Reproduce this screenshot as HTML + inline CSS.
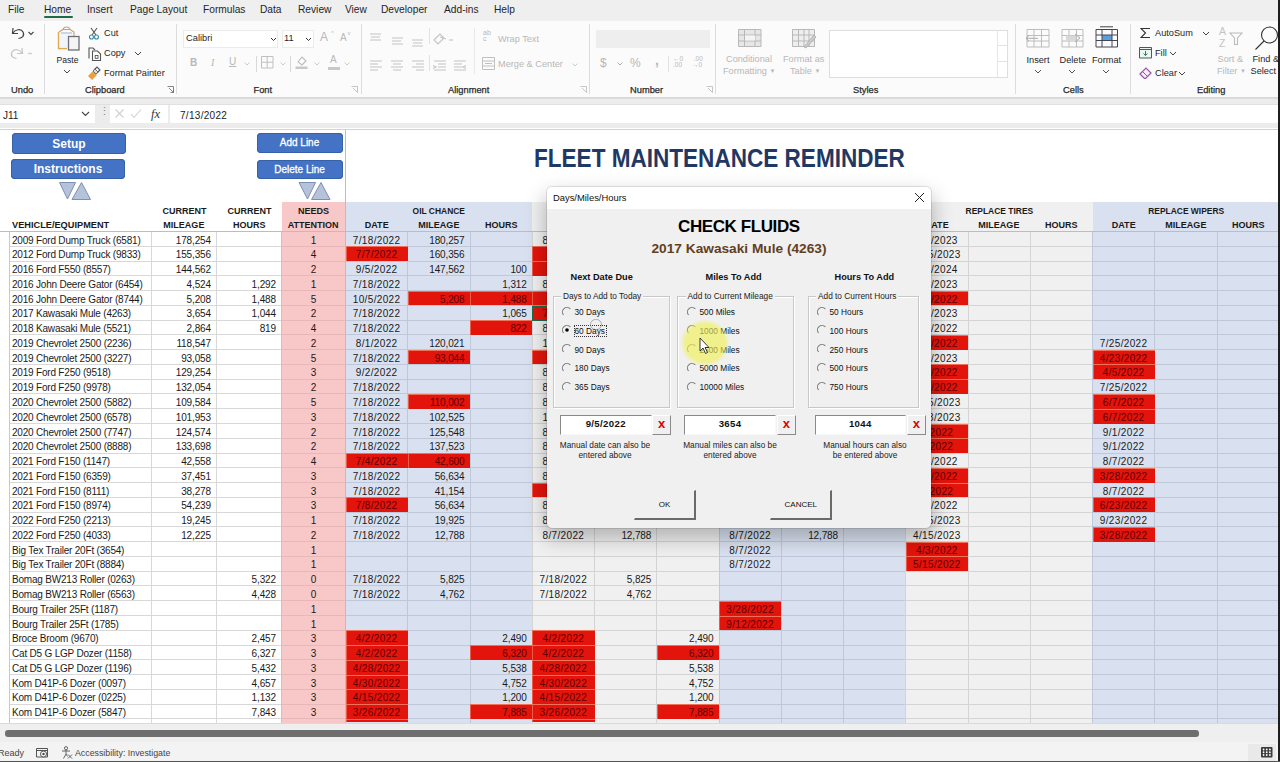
<!DOCTYPE html>
<html><head><meta charset="utf-8">
<style>
*{box-sizing:border-box}
html,body{margin:0;padding:0;width:1280px;height:762px;overflow:hidden;background:#fff;font-family:"Liberation Sans",sans-serif;color:#222}
#root{position:relative;width:1280px;height:762px;overflow:hidden}
#root div, #root span.a{position:absolute}
.tab{top:3.8px;font-size:10.2px;color:#262626;white-space:nowrap}
.rb{font-size:9.5px;color:#262626;white-space:nowrap}
.dis{color:#b8b8b8}
.glbl{top:84.5px;font-size:9.3px;color:#2a2a2a;white-space:nowrap;-webkit-text-stroke:0.25px #2a2a2a}
.sep{width:1px;background:#dcdcdc}
.c{font-size:10px;line-height:14.77px;height:14.77px;color:#1a1a1a;white-space:nowrap;padding:0 5.5px 0 2.5px}
.nm{letter-spacing:-0.2px}.dt{letter-spacing:0.35px}.nb{letter-spacing:-0.12px}
.rt{color:#5e0000}
.red{background:#e3140b;box-shadow:inset 0 1px 0 #f0705a, inset 1px 0 0 #ec5a48}
.h{font-size:9.6px;font-weight:bold;line-height:14px;color:#1a1a1a;text-align:center;white-space:nowrap}
.btn{background:#4472c4;border-radius:4px;box-shadow:inset 0 0 0 1px #3560aa;color:#fff;font-weight:bold;text-align:center;white-space:nowrap}
.dlg{font-size:9px;color:#222;white-space:nowrap}
</style></head><body><div id="root">

<!-- tab row -->
<div style="left:0;top:0;width:1280px;height:21px;background:#efefef"></div>
<div class="tab" style="left:8px">File</div>
<div class="tab" style="left:44px;color:#1e1e1e">Home</div>
<div style="left:44px;top:16px;width:29px;height:2px;background:#1e6b48;border-radius:1px"></div>
<div class="tab" style="left:87px">Insert</div>
<div class="tab" style="left:130px">Page Layout</div>
<div class="tab" style="left:203px">Formulas</div>
<div class="tab" style="left:260px">Data</div>
<div class="tab" style="left:298px">Review</div>
<div class="tab" style="left:345px">View</div>
<div class="tab" style="left:381px">Developer</div>
<div class="tab" style="left:444px">Add-ins</div>
<div class="tab" style="left:494px">Help</div>

<!-- ribbon body -->
<div style="left:0;top:21px;width:1280px;height:77px;background:#fbfbfb"></div>
<div style="left:0;top:97px;width:1280px;height:1px;background:#d8d8d8"></div>
<div style="left:0;top:98px;width:1280px;height:30px;background:#ececec"></div>
<!-- separators -->
<div class="sep" style="left:44px;top:24px;height:70px"></div>
<div class="sep" style="left:176px;top:24px;height:70px"></div>
<div class="sep" style="left:360.5px;top:24px;height:70px"></div>
<div class="sep" style="left:589px;top:24px;height:70px"></div>
<div class="sep" style="left:715px;top:24px;height:70px"></div>
<div class="sep" style="left:1015px;top:24px;height:70px"></div>
<div class="sep" style="left:1129.5px;top:24px;height:70px"></div>

<!-- group labels -->
<div class="glbl" style="left:11px">Undo</div>
<div class="glbl" style="left:85px">Clipboard</div>
<div class="glbl" style="left:253.5px">Font</div>
<div class="glbl" style="left:448px">Alignment</div>
<div class="glbl" style="left:630px">Number</div>
<div class="glbl" style="left:853px">Styles</div>
<div class="glbl" style="left:1063px">Cells</div>
<div class="glbl" style="left:1197px">Editing</div>
<svg style="position:absolute;left:167px;top:86px" width="8" height="8"><path d="M0.5 0.5h6v6M2 2l4.5 4.5M6.5 3.5v3h-3" fill="none" stroke="#777" stroke-width="0.9"/></svg>
<svg style="position:absolute;left:351px;top:86px" width="8" height="8"><path d="M0.5 0.5h6v6M2 2l4.5 4.5" fill="none" stroke="#c0c0c0" stroke-width="0.9"/></svg>
<svg style="position:absolute;left:580px;top:86px" width="8" height="8"><path d="M0.5 0.5h6v6M2 2l4.5 4.5" fill="none" stroke="#c0c0c0" stroke-width="0.9"/></svg>
<svg style="position:absolute;left:706px;top:86px" width="8" height="8"><path d="M0.5 0.5h6v6M2 2l4.5 4.5" fill="none" stroke="#c0c0c0" stroke-width="0.9"/></svg>

<!-- Undo group -->
<svg style="position:absolute;left:9px;top:25px" width="28" height="36">
 <path d="M4 3 L3.5 8.5 L9 8.5" fill="none" stroke="#444" stroke-width="1.2"/>
 <path d="M3.8 8.3 C6 4.5 12 3 14 7 C16 11 13 13 9.5 13.5" fill="none" stroke="#444" stroke-width="1.2"/>
 <path d="M19.5 7 l2.5 2.5 l2.5 -2.5" fill="none" stroke="#444" stroke-width="1.1"/>
 <path d="M13 23 L13.5 28.5 L8 28.5" fill="none" stroke="#c4c4c4" stroke-width="1.2"/>
 <path d="M13.2 28.3 C11 24.5 5 23 3 27 C1 31 4 33 7.5 33.5" fill="none" stroke="#c4c4c4" stroke-width="1.2"/>
 <path d="M19 28.5 h4" stroke="#d0d0d0" stroke-width="1.5"/>
</svg>

<!-- Clipboard group -->
<svg style="position:absolute;left:56px;top:26px" width="26" height="26">
 <path d="M3 6 L7 3.5 M14 3.5 L18 6 v4" fill="none" stroke="#c8a46a" stroke-width="1.2"/>
 <path d="M2.5 6 V22.5 H11" fill="none" stroke="#e0a850" stroke-width="1.4"/>
 <path d="M7 3.5 C7.5 1.5 8.5 1 10.5 1 C12.5 1 13.5 1.5 14 3.5 Z" fill="none" stroke="#c8a46a" stroke-width="1.1"/>
 <rect x="4" y="6.5" width="13" height="15" fill="#f1f5fa"/><path d="M5 7h11" stroke="#a8c4dc" stroke-width="1.2"/>
 <rect x="12.5" y="10.5" width="10.5" height="13.5" fill="#f4f4f4" stroke="#6e6e78" stroke-width="1.3"/>
</svg>
<div class="rb" style="left:56.5px;top:54.5px;font-size:8.6px">Paste</div>
<svg style="position:absolute;left:63px;top:69px" width="8" height="5"><path d="M1 1l3 3l3-3" fill="none" stroke="#444" stroke-width="1"/></svg>
<svg style="position:absolute;left:88px;top:27px" width="12" height="13"><path d="M3 1 L8 8 M9 1 L4 8" stroke="#555" stroke-width="1.1"/><circle cx="3.5" cy="10" r="2" fill="none" stroke="#3a8fa8" stroke-width="1.1"/><circle cx="8.5" cy="10" r="2" fill="none" stroke="#3a8fa8" stroke-width="1.1"/></svg>
<div class="rb" style="left:104px;top:28px;font-size:9.2px">Cut</div>
<svg style="position:absolute;left:87.5px;top:46.5px" width="15" height="14"><path d="M1 11.5 V1 h4 l2 2" fill="none" stroke="#555" stroke-width="1.1"/><path d="M4.5 4 h5 l3 3 v6.5 h-8 Z" fill="#fff" stroke="#555" stroke-width="1.1"/><rect x="7.2" y="8.5" width="2.8" height="2.8" fill="none" stroke="#555" stroke-width="0.9"/></svg>
<div class="rb" style="left:104px;top:48px;font-size:9.2px">Copy</div>
<svg style="position:absolute;left:134px;top:51px" width="8" height="5"><path d="M1 1l3 3l3-3" fill="none" stroke="#444" stroke-width="1"/></svg>
<svg style="position:absolute;left:87px;top:66px" width="14" height="14"><path d="M1 10 L6 5 L10 9 L5 14 Z" fill="#e8a040"/><path d="M7 4 L10 1 L13 4 L10 7" fill="none" stroke="#555" stroke-width="1.1"/><path d="M6 5 L8 3 L11 6 L9 8 Z" fill="#ddd" stroke="#555" stroke-width="0.8"/></svg>
<div class="rb" style="left:104px;top:68px;font-size:9.2px">Format Painter</div>

<!-- Font group -->
<div style="left:183px;top:30px;width:95px;height:18px;background:#fff;border:1px solid #ebebeb"></div>
<div class="rb" style="left:186px;top:33px;font-size:9.3px">Calibri</div>
<svg style="position:absolute;left:270px;top:37px" width="7" height="5"><path d="M1 1l2.5 2.5l2.5-2.5" fill="none" stroke="#333" stroke-width="1"/></svg>
<div style="left:281.5px;top:30px;width:32px;height:18px;background:#fff;border:1px solid #ebebeb"></div>
<div class="rb" style="left:284px;top:33px;font-size:9.3px">11</div>
<svg style="position:absolute;left:305px;top:37px" width="7" height="5"><path d="M1 1l2.5 2.5l2.5-2.5" fill="none" stroke="#333" stroke-width="1"/></svg>
<div class="rb dis" style="left:320px;top:30px;font-size:12px">A</div>
<div class="rb dis" style="left:331px;top:30px;font-size:6px">^</div>
<div class="rb dis" style="left:340px;top:32px;font-size:10px">A</div>
<div class="rb dis" style="left:347.5px;top:30px;font-size:6px">v</div>
<div class="rb dis" style="left:190px;top:57px;font-size:10px;font-weight:bold">B</div>
<div class="rb dis" style="left:211px;top:57px;font-size:10px;font-style:italic;font-family:'Liberation Serif'">I</div>
<div class="rb dis" style="left:229px;top:56px;font-size:10px;text-decoration:underline">U</div>
<svg style="position:absolute;left:244px;top:62px" width="6" height="4"><path d="M0.5 0.5l2.5 2.5l2.5-2.5" fill="none" stroke="#ccc" stroke-width="1"/></svg>
<div class="sep" style="left:256px;top:56px;height:16px;background:#d8d8d8"></div>
<svg style="position:absolute;left:261px;top:56px" width="13" height="13"><path d="M0.5 0.5h11.5v11.5h-11.5z M6.2 0.5v11.5 M0.5 6.2h11.5" fill="none" stroke="#c0c0c0" stroke-width="1"/></svg>
<svg style="position:absolute;left:280px;top:62px" width="6" height="4"><path d="M0.5 0.5l2.5 2.5l2.5-2.5" fill="none" stroke="#ccc" stroke-width="1"/></svg>
<div class="sep" style="left:290px;top:56px;height:16px;background:#d8d8d8"></div>
<svg style="position:absolute;left:295px;top:55px" width="14" height="15"><path d="M3 7 L7 2 L11 6 L7 10 Z" fill="none" stroke="#bbb" stroke-width="1.1"/><rect x="0.5" y="11.5" width="12" height="2.5" fill="#c8c8c8"/></svg>
<svg style="position:absolute;left:314px;top:62px" width="6" height="4"><path d="M0.5 0.5l2.5 2.5l2.5-2.5" fill="none" stroke="#ccc" stroke-width="1"/></svg>
<div class="rb dis" style="left:330px;top:54px;font-size:10px">A</div>
<div style="left:327.5px;top:67px;width:12px;height:2.5px;background:#c8c8c8"></div>
<svg style="position:absolute;left:344px;top:62px" width="6" height="4"><path d="M0.5 0.5l2.5 2.5l2.5-2.5" fill="none" stroke="#ccc" stroke-width="1"/></svg>

<!-- Alignment group -->
<svg style="position:absolute;left:368px;top:31px" width="60" height="40" stroke="#c4c4c4" stroke-width="1.1" fill="none">
 <path d="M2 3h11 M3 6h9 M2 9h11"/>
 <path d="M24 7h11 M24 10h9 M24 13h11"/>
 <path d="M44 9h11 M45 12h9 M44 15h11"/>
 <path d="M2 30h12 M2 33h8 M2 36h12 M2 39h8"/>
 <path d="M23 30h12 M25 33h8 M23 36h12 M25 39h8"/>
 <path d="M44 30h12 M48 33h8 M44 36h12 M48 39h8"/>
</svg>
<div class="sep" style="left:428.5px;top:28px;height:16px;background:#e2e2e2"></div>
<div class="sep" style="left:428.5px;top:55px;height:16px;background:#e2e2e2"></div>
<svg style="position:absolute;left:432px;top:31px" width="40" height="40" stroke="#c4c4c4" stroke-width="1.1" fill="none">
 <path d="M2 9 L8 3 L12 7 L6 13 Z M8 6 l6 2" />
 <path d="M17 9h4"/>
 <path d="M2 30h12 M6 33h8 M6 36h8 M2 39h12 M1 34.5l3 1.5l-3 1.5"/>
 <path d="M22 30h12 M22 33h8 M22 36h8 M22 39h12 M34 34.5l-3 1.5l3 1.5"/>
</svg>
<div class="sep" style="left:473.5px;top:28px;height:46px;background:#e8e8e8"></div>
<div class="rb dis" style="left:483px;top:30px;font-size:7px;line-height:6px">ab<br>c</div>
<div class="rb dis" style="left:498px;top:34px;font-size:9.2px">Wrap Text</div>
<svg style="position:absolute;left:482px;top:57px" width="13" height="13"><path d="M0.5 0.5h12v12h-12z M0.5 4h12 M0.5 9h12 M3 6.5h7" fill="none" stroke="#c0c0c0" stroke-width="1"/></svg>
<div class="rb dis" style="left:498px;top:59px;font-size:9.2px">Merge &amp; Center</div>
<svg style="position:absolute;left:572px;top:63px" width="6" height="4"><path d="M0.5 0.5l2.5 2.5l2.5-2.5" fill="none" stroke="#ccc" stroke-width="1"/></svg>

<!-- Number group -->
<div style="left:595.5px;top:29.5px;width:114px;height:18px;background:#eeeeee"></div>
<div class="rb dis" style="left:600px;top:56px;font-size:12px">$</div>
<svg style="position:absolute;left:617px;top:62px" width="6" height="4"><path d="M0.5 0.5l2.5 2.5l2.5-2.5" fill="none" stroke="#aaa" stroke-width="1"/></svg>
<div class="rb dis" style="left:630px;top:56px;font-size:12px">%</div>
<div class="rb dis" style="left:655px;top:52px;font-size:14px;font-weight:bold">,</div>
<div class="sep" style="left:668px;top:56px;height:16px;background:#e2e2e2"></div>
<div class="rb dis" style="left:673px;top:56px;font-size:6.5px;line-height:6px">&#8592;0<br>.00</div>
<div class="rb dis" style="left:692px;top:56px;font-size:6.5px;line-height:6px">&nbsp;.00<br>&#8594;0</div>

<!-- Styles group -->
<svg style="position:absolute;left:738px;top:28.5px" width="24" height="18"><path d="M0.5 0.5h22.5v17h-22.5z M0.5 6h22.5 M0.5 12h22.5 M6.5 0.5v17 M17 0.5v17" fill="#e6e6e6" stroke="#b8b8b8" stroke-width="1"/><rect x="7" y="6.5" width="10" height="5" fill="#f4f4f4"/></svg>
<div class="rb dis" style="left:726px;top:54px;font-size:9.2px">Conditional</div>
<div class="rb dis" style="left:723px;top:65.5px;font-size:9.2px">Formatting <span style="font-size:6px;vertical-align:1px">▼</span></div>
<svg style="position:absolute;left:792px;top:28.5px" width="25" height="20"><path d="M0.5 0.5h22v17h-22z M0.5 6h22 M0.5 12h22 M6.5 0.5v17 M12 0.5v17 M17 0.5v17" fill="#eee" stroke="#b8b8b8" stroke-width="1"/><path d="M12 18 L22 6 L24 8 L14 19 Z" fill="#ccc" stroke="#aaa" stroke-width="0.8"/></svg>
<div class="rb dis" style="left:783px;top:54px;font-size:9.2px">Format as</div>
<div class="rb dis" style="left:790px;top:65.5px;font-size:9.2px">Table <span style="font-size:6px;vertical-align:1px">▼</span></div>
<div style="left:828.5px;top:29.5px;width:179px;height:48px;background:#fff;border:1px solid #dedede"></div>
<div style="left:997px;top:29.5px;width:1px;height:48px;background:#e6e6e6"></div>
<div style="left:997px;top:45px;width:10px;height:1px;background:#e2e2e2"></div>
<div style="left:997px;top:61px;width:10px;height:1px;background:#e2e2e2"></div>

<!-- Cells group -->
<svg style="position:absolute;left:1026px;top:29px" width="24" height="19" fill="none" stroke="#bdbdbd" stroke-width="1"><path d="M1 0.5h22v17.5h-22z M1 6.5h22 M1 12h22 M8 0.5v17.5 M15.5 0.5v17.5"/><path d="M0 9.3h12 M3 6.5l-3 2.8l3 2.8" stroke="#aaa"/></svg>
<div class="rb" style="left:1026.5px;top:55px;font-size:9.2px">Insert</div>
<svg style="position:absolute;left:1034px;top:69px" width="8" height="5"><path d="M1 1l3 3l3-3" fill="none" stroke="#555" stroke-width="1"/></svg>
<svg style="position:absolute;left:1061px;top:29px" width="24" height="19" fill="none" stroke="#bdbdbd" stroke-width="1"><path d="M1 0.5h21v17.5h-21z M1 6.5h21 M1 12h21 M8 0.5v17.5 M15.5 0.5v17.5"/><rect x="5" y="6.5" width="10" height="5.5" fill="#d8d8d8" stroke="none"/><path d="M14 5 l5 4 l-5 4" stroke="#aaa"/></svg>
<div class="rb" style="left:1059.5px;top:55px;font-size:9.2px">Delete</div>
<svg style="position:absolute;left:1068px;top:69px" width="8" height="5"><path d="M1 1l3 3l3-3" fill="none" stroke="#555" stroke-width="1"/></svg>
<svg style="position:absolute;left:1095px;top:26px" width="24" height="22" fill="none"><path d="M5 0.8h13" stroke="#444" stroke-width="1"/><rect x="7" y="9" width="10" height="5.5" fill="#5aa0e0"/><path d="M1 3.5h21.5v17.5h-21.5z M1 9h21.5 M1 14.5h21.5 M7 3.5v17.5 M17 3.5v17.5" stroke="#445" stroke-width="1"/></svg>
<div class="rb" style="left:1092px;top:55px;font-size:9.2px">Format</div>
<svg style="position:absolute;left:1102px;top:69px" width="8" height="5"><path d="M1 1l3 3l3-3" fill="none" stroke="#555" stroke-width="1"/></svg>

<!-- Editing group -->
<svg style="position:absolute;left:1140px;top:26.5px" width="11" height="12"><path d="M10 1.5 H1 L5.5 6 L1 10.5 H10" fill="none" stroke="#333" stroke-width="1.1"/></svg>
<div class="rb" style="left:1155px;top:28px;font-size:9.2px">AutoSum</div>
<svg style="position:absolute;left:1202px;top:31px" width="8" height="5"><path d="M1 1l3 3l3-3" fill="none" stroke="#444" stroke-width="1"/></svg>
<svg style="position:absolute;left:1139px;top:47px" width="13" height="12"><path d="M0.5 0.5h12v10.5h-12z" fill="#eef6f4" stroke="#4a5a5a" stroke-width="1"/><path d="M0.5 2.5h12" stroke="#4a5a5a" stroke-width="1"/><path d="M6.5 4v4.5 M4.5 6.5l2 2l2-2" fill="none" stroke="#2e7d5e" stroke-width="1"/></svg>
<div class="rb" style="left:1155px;top:48px;font-size:9.2px">Fill</div>
<svg style="position:absolute;left:1169px;top:51px" width="8" height="5"><path d="M1 1l3 3l3-3" fill="none" stroke="#444" stroke-width="1"/></svg>
<svg style="position:absolute;left:1139px;top:67px" width="13" height="12"><path d="M1 7 L7 1 L12 6 L6 12 Z" fill="#f4eef8" stroke="#a050b0" stroke-width="1.2"/><path d="M3.5 4.5 L8.5 9.5" stroke="#a050b0" stroke-width="1"/></svg>
<div class="rb" style="left:1155px;top:68px;font-size:9.2px">Clear</div>
<svg style="position:absolute;left:1178px;top:71px" width="8" height="5"><path d="M1 1l3 3l3-3" fill="none" stroke="#444" stroke-width="1"/></svg>
<div class="rb dis" style="left:1219px;top:24.5px;font-size:10.5px;line-height:12px;color:#c4c4c4">A<br>Z</div>
<svg style="position:absolute;left:1229px;top:32px" width="14" height="14"><path d="M1 1h12l-4.5 5v6.5h-3v-6.5z" fill="none" stroke="#bbb" stroke-width="1.1"/></svg>
<div class="rb dis" style="left:1217.5px;top:54px;font-size:9.2px">Sort &amp;</div>
<div class="rb dis" style="left:1217px;top:65.5px;font-size:9.2px">Filter <span style="font-size:6px;vertical-align:1px">▼</span></div>
<svg style="position:absolute;left:1254px;top:25px" width="26" height="26"><circle cx="15.5" cy="10" r="8" fill="none" stroke="#333" stroke-width="1.1"/><path d="M10 16 L1.5 24.5" stroke="#333" stroke-width="1.1"/></svg>
<div class="rb" style="left:1252.5px;top:54px;font-size:9.2px">Find &amp;</div>
<div class="rb" style="left:1250.5px;top:65.5px;font-size:9.2px">Select <span style="font-size:6px;vertical-align:1px">▼</span></div>


<!-- formula bar -->
<div style="left:0;top:104px;width:95px;height:19px;background:#fff"></div>
<div class="rb" style="left:3px;top:109.5px;font-size:10px;color:#222">J11</div>
<div class="rb" style="left:99px;top:105px;font-size:11px;color:#888">&#8942;</div>
<svg style="position:absolute;left:81px;top:111px" width="9" height="6"><path d="M1 1l3.5 3.5l3.5-3.5" fill="none" stroke="#444" stroke-width="1.1"/></svg>
<div style="left:110px;top:104px;width:58px;height:19px;background:#fff"></div>
<div style="left:170px;top:104px;width:1110px;height:19px;background:#fff"></div>
<div class="rb" style="left:180px;top:109.5px;font-size:10px;color:#222;letter-spacing:0.3px">7/13/2022</div>
<svg style="position:absolute;left:114px;top:108px" width="36" height="12"><path d="M1.5 1.5l8 8 M9.5 1.5l-8 8" stroke="#d0d0d0" stroke-width="1.1"/><path d="M17 6l3 3.5l7-8" fill="none" stroke="#d0d0d0" stroke-width="1.1"/></svg>
<div class="rb" style="left:151px;top:106.5px;font-size:12.5px;font-style:italic;font-family:'Liberation Serif';color:#333">fx</div>

<!-- sheet -->
<div style="left:0;top:129.5px;width:1280px;height:595px;background:#fff"></div>
<div style="left:0;top:129px;width:1280px;height:1.2px;background:#d2d2d2"></div>
<div style="left:0;top:97.5px;width:1280px;height:1px;background:#dcdcdc"></div>
<div style="left:0;top:103.8px;width:1280px;height:0.8px;background:#e0e0e0"></div>
<div style="left:281.5px;top:202px;width:64.0px;height:520.5px;background:#f8c8c8"></div>
<div style="left:345.5px;top:202px;width:62.25px;height:520.5px;background:#d9e1f0"></div>
<div style="left:407.75px;top:202px;width:62.25px;height:520.5px;background:#d9e1f0"></div>
<div style="left:470.0px;top:202px;width:62.25px;height:520.5px;background:#d9e1f0"></div>
<div style="left:532.25px;top:202px;width:62.25px;height:520.5px;background:#f0f0f0"></div>
<div style="left:594.5px;top:202px;width:62.25px;height:520.5px;background:#f0f0f0"></div>
<div style="left:656.75px;top:202px;width:62.25px;height:520.5px;background:#f0f0f0"></div>
<div style="left:719.0px;top:202px;width:62.25px;height:520.5px;background:#d9e1f0"></div>
<div style="left:781.25px;top:202px;width:62.25px;height:520.5px;background:#d9e1f0"></div>
<div style="left:843.5px;top:202px;width:62.25px;height:520.5px;background:#d9e1f0"></div>
<div style="left:905.75px;top:202px;width:62.25px;height:520.5px;background:#f0f0f0"></div>
<div style="left:968.0px;top:202px;width:62.25px;height:520.5px;background:#f0f0f0"></div>
<div style="left:1030.25px;top:202px;width:62.25px;height:520.5px;background:#f0f0f0"></div>
<div style="left:1092.5px;top:202px;width:62.25px;height:520.5px;background:#d9e1f0"></div>
<div style="left:1154.75px;top:202px;width:62.25px;height:520.5px;background:#d9e1f0"></div>
<div style="left:1217.0px;top:202px;width:62.25px;height:520.5px;background:#d9e1f0"></div>
<div style="left:9.5px;top:245.77px;width:142.0px;height:1px;background:#d8d8d8"></div>
<div style="left:151.5px;top:245.77px;width:65.0px;height:1px;background:#d8d8d8"></div>
<div style="left:216.5px;top:245.77px;width:65.0px;height:1px;background:#d8d8d8"></div>
<div style="left:281.5px;top:245.77px;width:64.0px;height:1px;background:#e8b8b8"></div>
<div style="left:345.5px;top:245.77px;width:62.25px;height:1px;background:#bfc8d8"></div>
<div style="left:407.75px;top:245.77px;width:62.25px;height:1px;background:#bfc8d8"></div>
<div style="left:470.0px;top:245.77px;width:62.25px;height:1px;background:#bfc8d8"></div>
<div style="left:532.25px;top:245.77px;width:62.25px;height:1px;background:#d4d4d4"></div>
<div style="left:594.5px;top:245.77px;width:62.25px;height:1px;background:#d4d4d4"></div>
<div style="left:656.75px;top:245.77px;width:62.25px;height:1px;background:#d4d4d4"></div>
<div style="left:719.0px;top:245.77px;width:62.25px;height:1px;background:#bfc8d8"></div>
<div style="left:781.25px;top:245.77px;width:62.25px;height:1px;background:#bfc8d8"></div>
<div style="left:843.5px;top:245.77px;width:62.25px;height:1px;background:#bfc8d8"></div>
<div style="left:905.75px;top:245.77px;width:62.25px;height:1px;background:#d4d4d4"></div>
<div style="left:968.0px;top:245.77px;width:62.25px;height:1px;background:#d4d4d4"></div>
<div style="left:1030.25px;top:245.77px;width:62.25px;height:1px;background:#d4d4d4"></div>
<div style="left:1092.5px;top:245.77px;width:62.25px;height:1px;background:#bfc8d8"></div>
<div style="left:1154.75px;top:245.77px;width:62.25px;height:1px;background:#bfc8d8"></div>
<div style="left:1217.0px;top:245.77px;width:62.25px;height:1px;background:#bfc8d8"></div>
<div style="left:9.5px;top:260.54px;width:142.0px;height:1px;background:#d8d8d8"></div>
<div style="left:151.5px;top:260.54px;width:65.0px;height:1px;background:#d8d8d8"></div>
<div style="left:216.5px;top:260.54px;width:65.0px;height:1px;background:#d8d8d8"></div>
<div style="left:281.5px;top:260.54px;width:64.0px;height:1px;background:#e8b8b8"></div>
<div style="left:345.5px;top:260.54px;width:62.25px;height:1px;background:#bfc8d8"></div>
<div style="left:407.75px;top:260.54px;width:62.25px;height:1px;background:#bfc8d8"></div>
<div style="left:470.0px;top:260.54px;width:62.25px;height:1px;background:#bfc8d8"></div>
<div style="left:532.25px;top:260.54px;width:62.25px;height:1px;background:#d4d4d4"></div>
<div style="left:594.5px;top:260.54px;width:62.25px;height:1px;background:#d4d4d4"></div>
<div style="left:656.75px;top:260.54px;width:62.25px;height:1px;background:#d4d4d4"></div>
<div style="left:719.0px;top:260.54px;width:62.25px;height:1px;background:#bfc8d8"></div>
<div style="left:781.25px;top:260.54px;width:62.25px;height:1px;background:#bfc8d8"></div>
<div style="left:843.5px;top:260.54px;width:62.25px;height:1px;background:#bfc8d8"></div>
<div style="left:905.75px;top:260.54px;width:62.25px;height:1px;background:#d4d4d4"></div>
<div style="left:968.0px;top:260.54px;width:62.25px;height:1px;background:#d4d4d4"></div>
<div style="left:1030.25px;top:260.54px;width:62.25px;height:1px;background:#d4d4d4"></div>
<div style="left:1092.5px;top:260.54px;width:62.25px;height:1px;background:#bfc8d8"></div>
<div style="left:1154.75px;top:260.54px;width:62.25px;height:1px;background:#bfc8d8"></div>
<div style="left:1217.0px;top:260.54px;width:62.25px;height:1px;background:#bfc8d8"></div>
<div style="left:9.5px;top:275.31px;width:142.0px;height:1px;background:#d8d8d8"></div>
<div style="left:151.5px;top:275.31px;width:65.0px;height:1px;background:#d8d8d8"></div>
<div style="left:216.5px;top:275.31px;width:65.0px;height:1px;background:#d8d8d8"></div>
<div style="left:281.5px;top:275.31px;width:64.0px;height:1px;background:#e8b8b8"></div>
<div style="left:345.5px;top:275.31px;width:62.25px;height:1px;background:#bfc8d8"></div>
<div style="left:407.75px;top:275.31px;width:62.25px;height:1px;background:#bfc8d8"></div>
<div style="left:470.0px;top:275.31px;width:62.25px;height:1px;background:#bfc8d8"></div>
<div style="left:532.25px;top:275.31px;width:62.25px;height:1px;background:#d4d4d4"></div>
<div style="left:594.5px;top:275.31px;width:62.25px;height:1px;background:#d4d4d4"></div>
<div style="left:656.75px;top:275.31px;width:62.25px;height:1px;background:#d4d4d4"></div>
<div style="left:719.0px;top:275.31px;width:62.25px;height:1px;background:#bfc8d8"></div>
<div style="left:781.25px;top:275.31px;width:62.25px;height:1px;background:#bfc8d8"></div>
<div style="left:843.5px;top:275.31px;width:62.25px;height:1px;background:#bfc8d8"></div>
<div style="left:905.75px;top:275.31px;width:62.25px;height:1px;background:#d4d4d4"></div>
<div style="left:968.0px;top:275.31px;width:62.25px;height:1px;background:#d4d4d4"></div>
<div style="left:1030.25px;top:275.31px;width:62.25px;height:1px;background:#d4d4d4"></div>
<div style="left:1092.5px;top:275.31px;width:62.25px;height:1px;background:#bfc8d8"></div>
<div style="left:1154.75px;top:275.31px;width:62.25px;height:1px;background:#bfc8d8"></div>
<div style="left:1217.0px;top:275.31px;width:62.25px;height:1px;background:#bfc8d8"></div>
<div style="left:9.5px;top:290.08px;width:142.0px;height:1px;background:#d8d8d8"></div>
<div style="left:151.5px;top:290.08px;width:65.0px;height:1px;background:#d8d8d8"></div>
<div style="left:216.5px;top:290.08px;width:65.0px;height:1px;background:#d8d8d8"></div>
<div style="left:281.5px;top:290.08px;width:64.0px;height:1px;background:#e8b8b8"></div>
<div style="left:345.5px;top:290.08px;width:62.25px;height:1px;background:#bfc8d8"></div>
<div style="left:407.75px;top:290.08px;width:62.25px;height:1px;background:#bfc8d8"></div>
<div style="left:470.0px;top:290.08px;width:62.25px;height:1px;background:#bfc8d8"></div>
<div style="left:532.25px;top:290.08px;width:62.25px;height:1px;background:#d4d4d4"></div>
<div style="left:594.5px;top:290.08px;width:62.25px;height:1px;background:#d4d4d4"></div>
<div style="left:656.75px;top:290.08px;width:62.25px;height:1px;background:#d4d4d4"></div>
<div style="left:719.0px;top:290.08px;width:62.25px;height:1px;background:#bfc8d8"></div>
<div style="left:781.25px;top:290.08px;width:62.25px;height:1px;background:#bfc8d8"></div>
<div style="left:843.5px;top:290.08px;width:62.25px;height:1px;background:#bfc8d8"></div>
<div style="left:905.75px;top:290.08px;width:62.25px;height:1px;background:#d4d4d4"></div>
<div style="left:968.0px;top:290.08px;width:62.25px;height:1px;background:#d4d4d4"></div>
<div style="left:1030.25px;top:290.08px;width:62.25px;height:1px;background:#d4d4d4"></div>
<div style="left:1092.5px;top:290.08px;width:62.25px;height:1px;background:#bfc8d8"></div>
<div style="left:1154.75px;top:290.08px;width:62.25px;height:1px;background:#bfc8d8"></div>
<div style="left:1217.0px;top:290.08px;width:62.25px;height:1px;background:#bfc8d8"></div>
<div style="left:9.5px;top:304.85px;width:142.0px;height:1px;background:#d8d8d8"></div>
<div style="left:151.5px;top:304.85px;width:65.0px;height:1px;background:#d8d8d8"></div>
<div style="left:216.5px;top:304.85px;width:65.0px;height:1px;background:#d8d8d8"></div>
<div style="left:281.5px;top:304.85px;width:64.0px;height:1px;background:#e8b8b8"></div>
<div style="left:345.5px;top:304.85px;width:62.25px;height:1px;background:#bfc8d8"></div>
<div style="left:407.75px;top:304.85px;width:62.25px;height:1px;background:#bfc8d8"></div>
<div style="left:470.0px;top:304.85px;width:62.25px;height:1px;background:#bfc8d8"></div>
<div style="left:532.25px;top:304.85px;width:62.25px;height:1px;background:#d4d4d4"></div>
<div style="left:594.5px;top:304.85px;width:62.25px;height:1px;background:#d4d4d4"></div>
<div style="left:656.75px;top:304.85px;width:62.25px;height:1px;background:#d4d4d4"></div>
<div style="left:719.0px;top:304.85px;width:62.25px;height:1px;background:#bfc8d8"></div>
<div style="left:781.25px;top:304.85px;width:62.25px;height:1px;background:#bfc8d8"></div>
<div style="left:843.5px;top:304.85px;width:62.25px;height:1px;background:#bfc8d8"></div>
<div style="left:905.75px;top:304.85px;width:62.25px;height:1px;background:#d4d4d4"></div>
<div style="left:968.0px;top:304.85px;width:62.25px;height:1px;background:#d4d4d4"></div>
<div style="left:1030.25px;top:304.85px;width:62.25px;height:1px;background:#d4d4d4"></div>
<div style="left:1092.5px;top:304.85px;width:62.25px;height:1px;background:#bfc8d8"></div>
<div style="left:1154.75px;top:304.85px;width:62.25px;height:1px;background:#bfc8d8"></div>
<div style="left:1217.0px;top:304.85px;width:62.25px;height:1px;background:#bfc8d8"></div>
<div style="left:9.5px;top:319.62px;width:142.0px;height:1px;background:#d8d8d8"></div>
<div style="left:151.5px;top:319.62px;width:65.0px;height:1px;background:#d8d8d8"></div>
<div style="left:216.5px;top:319.62px;width:65.0px;height:1px;background:#d8d8d8"></div>
<div style="left:281.5px;top:319.62px;width:64.0px;height:1px;background:#e8b8b8"></div>
<div style="left:345.5px;top:319.62px;width:62.25px;height:1px;background:#bfc8d8"></div>
<div style="left:407.75px;top:319.62px;width:62.25px;height:1px;background:#bfc8d8"></div>
<div style="left:470.0px;top:319.62px;width:62.25px;height:1px;background:#bfc8d8"></div>
<div style="left:532.25px;top:319.62px;width:62.25px;height:1px;background:#d4d4d4"></div>
<div style="left:594.5px;top:319.62px;width:62.25px;height:1px;background:#d4d4d4"></div>
<div style="left:656.75px;top:319.62px;width:62.25px;height:1px;background:#d4d4d4"></div>
<div style="left:719.0px;top:319.62px;width:62.25px;height:1px;background:#bfc8d8"></div>
<div style="left:781.25px;top:319.62px;width:62.25px;height:1px;background:#bfc8d8"></div>
<div style="left:843.5px;top:319.62px;width:62.25px;height:1px;background:#bfc8d8"></div>
<div style="left:905.75px;top:319.62px;width:62.25px;height:1px;background:#d4d4d4"></div>
<div style="left:968.0px;top:319.62px;width:62.25px;height:1px;background:#d4d4d4"></div>
<div style="left:1030.25px;top:319.62px;width:62.25px;height:1px;background:#d4d4d4"></div>
<div style="left:1092.5px;top:319.62px;width:62.25px;height:1px;background:#bfc8d8"></div>
<div style="left:1154.75px;top:319.62px;width:62.25px;height:1px;background:#bfc8d8"></div>
<div style="left:1217.0px;top:319.62px;width:62.25px;height:1px;background:#bfc8d8"></div>
<div style="left:9.5px;top:334.39px;width:142.0px;height:1px;background:#d8d8d8"></div>
<div style="left:151.5px;top:334.39px;width:65.0px;height:1px;background:#d8d8d8"></div>
<div style="left:216.5px;top:334.39px;width:65.0px;height:1px;background:#d8d8d8"></div>
<div style="left:281.5px;top:334.39px;width:64.0px;height:1px;background:#e8b8b8"></div>
<div style="left:345.5px;top:334.39px;width:62.25px;height:1px;background:#bfc8d8"></div>
<div style="left:407.75px;top:334.39px;width:62.25px;height:1px;background:#bfc8d8"></div>
<div style="left:470.0px;top:334.39px;width:62.25px;height:1px;background:#bfc8d8"></div>
<div style="left:532.25px;top:334.39px;width:62.25px;height:1px;background:#d4d4d4"></div>
<div style="left:594.5px;top:334.39px;width:62.25px;height:1px;background:#d4d4d4"></div>
<div style="left:656.75px;top:334.39px;width:62.25px;height:1px;background:#d4d4d4"></div>
<div style="left:719.0px;top:334.39px;width:62.25px;height:1px;background:#bfc8d8"></div>
<div style="left:781.25px;top:334.39px;width:62.25px;height:1px;background:#bfc8d8"></div>
<div style="left:843.5px;top:334.39px;width:62.25px;height:1px;background:#bfc8d8"></div>
<div style="left:905.75px;top:334.39px;width:62.25px;height:1px;background:#d4d4d4"></div>
<div style="left:968.0px;top:334.39px;width:62.25px;height:1px;background:#d4d4d4"></div>
<div style="left:1030.25px;top:334.39px;width:62.25px;height:1px;background:#d4d4d4"></div>
<div style="left:1092.5px;top:334.39px;width:62.25px;height:1px;background:#bfc8d8"></div>
<div style="left:1154.75px;top:334.39px;width:62.25px;height:1px;background:#bfc8d8"></div>
<div style="left:1217.0px;top:334.39px;width:62.25px;height:1px;background:#bfc8d8"></div>
<div style="left:9.5px;top:349.16px;width:142.0px;height:1px;background:#d8d8d8"></div>
<div style="left:151.5px;top:349.16px;width:65.0px;height:1px;background:#d8d8d8"></div>
<div style="left:216.5px;top:349.16px;width:65.0px;height:1px;background:#d8d8d8"></div>
<div style="left:281.5px;top:349.16px;width:64.0px;height:1px;background:#e8b8b8"></div>
<div style="left:345.5px;top:349.16px;width:62.25px;height:1px;background:#bfc8d8"></div>
<div style="left:407.75px;top:349.16px;width:62.25px;height:1px;background:#bfc8d8"></div>
<div style="left:470.0px;top:349.16px;width:62.25px;height:1px;background:#bfc8d8"></div>
<div style="left:532.25px;top:349.16px;width:62.25px;height:1px;background:#d4d4d4"></div>
<div style="left:594.5px;top:349.16px;width:62.25px;height:1px;background:#d4d4d4"></div>
<div style="left:656.75px;top:349.16px;width:62.25px;height:1px;background:#d4d4d4"></div>
<div style="left:719.0px;top:349.16px;width:62.25px;height:1px;background:#bfc8d8"></div>
<div style="left:781.25px;top:349.16px;width:62.25px;height:1px;background:#bfc8d8"></div>
<div style="left:843.5px;top:349.16px;width:62.25px;height:1px;background:#bfc8d8"></div>
<div style="left:905.75px;top:349.16px;width:62.25px;height:1px;background:#d4d4d4"></div>
<div style="left:968.0px;top:349.16px;width:62.25px;height:1px;background:#d4d4d4"></div>
<div style="left:1030.25px;top:349.16px;width:62.25px;height:1px;background:#d4d4d4"></div>
<div style="left:1092.5px;top:349.16px;width:62.25px;height:1px;background:#bfc8d8"></div>
<div style="left:1154.75px;top:349.16px;width:62.25px;height:1px;background:#bfc8d8"></div>
<div style="left:1217.0px;top:349.16px;width:62.25px;height:1px;background:#bfc8d8"></div>
<div style="left:9.5px;top:363.93px;width:142.0px;height:1px;background:#d8d8d8"></div>
<div style="left:151.5px;top:363.93px;width:65.0px;height:1px;background:#d8d8d8"></div>
<div style="left:216.5px;top:363.93px;width:65.0px;height:1px;background:#d8d8d8"></div>
<div style="left:281.5px;top:363.93px;width:64.0px;height:1px;background:#e8b8b8"></div>
<div style="left:345.5px;top:363.93px;width:62.25px;height:1px;background:#bfc8d8"></div>
<div style="left:407.75px;top:363.93px;width:62.25px;height:1px;background:#bfc8d8"></div>
<div style="left:470.0px;top:363.93px;width:62.25px;height:1px;background:#bfc8d8"></div>
<div style="left:532.25px;top:363.93px;width:62.25px;height:1px;background:#d4d4d4"></div>
<div style="left:594.5px;top:363.93px;width:62.25px;height:1px;background:#d4d4d4"></div>
<div style="left:656.75px;top:363.93px;width:62.25px;height:1px;background:#d4d4d4"></div>
<div style="left:719.0px;top:363.93px;width:62.25px;height:1px;background:#bfc8d8"></div>
<div style="left:781.25px;top:363.93px;width:62.25px;height:1px;background:#bfc8d8"></div>
<div style="left:843.5px;top:363.93px;width:62.25px;height:1px;background:#bfc8d8"></div>
<div style="left:905.75px;top:363.93px;width:62.25px;height:1px;background:#d4d4d4"></div>
<div style="left:968.0px;top:363.93px;width:62.25px;height:1px;background:#d4d4d4"></div>
<div style="left:1030.25px;top:363.93px;width:62.25px;height:1px;background:#d4d4d4"></div>
<div style="left:1092.5px;top:363.93px;width:62.25px;height:1px;background:#bfc8d8"></div>
<div style="left:1154.75px;top:363.93px;width:62.25px;height:1px;background:#bfc8d8"></div>
<div style="left:1217.0px;top:363.93px;width:62.25px;height:1px;background:#bfc8d8"></div>
<div style="left:9.5px;top:378.70px;width:142.0px;height:1px;background:#d8d8d8"></div>
<div style="left:151.5px;top:378.70px;width:65.0px;height:1px;background:#d8d8d8"></div>
<div style="left:216.5px;top:378.70px;width:65.0px;height:1px;background:#d8d8d8"></div>
<div style="left:281.5px;top:378.70px;width:64.0px;height:1px;background:#e8b8b8"></div>
<div style="left:345.5px;top:378.70px;width:62.25px;height:1px;background:#bfc8d8"></div>
<div style="left:407.75px;top:378.70px;width:62.25px;height:1px;background:#bfc8d8"></div>
<div style="left:470.0px;top:378.70px;width:62.25px;height:1px;background:#bfc8d8"></div>
<div style="left:532.25px;top:378.70px;width:62.25px;height:1px;background:#d4d4d4"></div>
<div style="left:594.5px;top:378.70px;width:62.25px;height:1px;background:#d4d4d4"></div>
<div style="left:656.75px;top:378.70px;width:62.25px;height:1px;background:#d4d4d4"></div>
<div style="left:719.0px;top:378.70px;width:62.25px;height:1px;background:#bfc8d8"></div>
<div style="left:781.25px;top:378.70px;width:62.25px;height:1px;background:#bfc8d8"></div>
<div style="left:843.5px;top:378.70px;width:62.25px;height:1px;background:#bfc8d8"></div>
<div style="left:905.75px;top:378.70px;width:62.25px;height:1px;background:#d4d4d4"></div>
<div style="left:968.0px;top:378.70px;width:62.25px;height:1px;background:#d4d4d4"></div>
<div style="left:1030.25px;top:378.70px;width:62.25px;height:1px;background:#d4d4d4"></div>
<div style="left:1092.5px;top:378.70px;width:62.25px;height:1px;background:#bfc8d8"></div>
<div style="left:1154.75px;top:378.70px;width:62.25px;height:1px;background:#bfc8d8"></div>
<div style="left:1217.0px;top:378.70px;width:62.25px;height:1px;background:#bfc8d8"></div>
<div style="left:9.5px;top:393.47px;width:142.0px;height:1px;background:#d8d8d8"></div>
<div style="left:151.5px;top:393.47px;width:65.0px;height:1px;background:#d8d8d8"></div>
<div style="left:216.5px;top:393.47px;width:65.0px;height:1px;background:#d8d8d8"></div>
<div style="left:281.5px;top:393.47px;width:64.0px;height:1px;background:#e8b8b8"></div>
<div style="left:345.5px;top:393.47px;width:62.25px;height:1px;background:#bfc8d8"></div>
<div style="left:407.75px;top:393.47px;width:62.25px;height:1px;background:#bfc8d8"></div>
<div style="left:470.0px;top:393.47px;width:62.25px;height:1px;background:#bfc8d8"></div>
<div style="left:532.25px;top:393.47px;width:62.25px;height:1px;background:#d4d4d4"></div>
<div style="left:594.5px;top:393.47px;width:62.25px;height:1px;background:#d4d4d4"></div>
<div style="left:656.75px;top:393.47px;width:62.25px;height:1px;background:#d4d4d4"></div>
<div style="left:719.0px;top:393.47px;width:62.25px;height:1px;background:#bfc8d8"></div>
<div style="left:781.25px;top:393.47px;width:62.25px;height:1px;background:#bfc8d8"></div>
<div style="left:843.5px;top:393.47px;width:62.25px;height:1px;background:#bfc8d8"></div>
<div style="left:905.75px;top:393.47px;width:62.25px;height:1px;background:#d4d4d4"></div>
<div style="left:968.0px;top:393.47px;width:62.25px;height:1px;background:#d4d4d4"></div>
<div style="left:1030.25px;top:393.47px;width:62.25px;height:1px;background:#d4d4d4"></div>
<div style="left:1092.5px;top:393.47px;width:62.25px;height:1px;background:#bfc8d8"></div>
<div style="left:1154.75px;top:393.47px;width:62.25px;height:1px;background:#bfc8d8"></div>
<div style="left:1217.0px;top:393.47px;width:62.25px;height:1px;background:#bfc8d8"></div>
<div style="left:9.5px;top:408.24px;width:142.0px;height:1px;background:#d8d8d8"></div>
<div style="left:151.5px;top:408.24px;width:65.0px;height:1px;background:#d8d8d8"></div>
<div style="left:216.5px;top:408.24px;width:65.0px;height:1px;background:#d8d8d8"></div>
<div style="left:281.5px;top:408.24px;width:64.0px;height:1px;background:#e8b8b8"></div>
<div style="left:345.5px;top:408.24px;width:62.25px;height:1px;background:#bfc8d8"></div>
<div style="left:407.75px;top:408.24px;width:62.25px;height:1px;background:#bfc8d8"></div>
<div style="left:470.0px;top:408.24px;width:62.25px;height:1px;background:#bfc8d8"></div>
<div style="left:532.25px;top:408.24px;width:62.25px;height:1px;background:#d4d4d4"></div>
<div style="left:594.5px;top:408.24px;width:62.25px;height:1px;background:#d4d4d4"></div>
<div style="left:656.75px;top:408.24px;width:62.25px;height:1px;background:#d4d4d4"></div>
<div style="left:719.0px;top:408.24px;width:62.25px;height:1px;background:#bfc8d8"></div>
<div style="left:781.25px;top:408.24px;width:62.25px;height:1px;background:#bfc8d8"></div>
<div style="left:843.5px;top:408.24px;width:62.25px;height:1px;background:#bfc8d8"></div>
<div style="left:905.75px;top:408.24px;width:62.25px;height:1px;background:#d4d4d4"></div>
<div style="left:968.0px;top:408.24px;width:62.25px;height:1px;background:#d4d4d4"></div>
<div style="left:1030.25px;top:408.24px;width:62.25px;height:1px;background:#d4d4d4"></div>
<div style="left:1092.5px;top:408.24px;width:62.25px;height:1px;background:#bfc8d8"></div>
<div style="left:1154.75px;top:408.24px;width:62.25px;height:1px;background:#bfc8d8"></div>
<div style="left:1217.0px;top:408.24px;width:62.25px;height:1px;background:#bfc8d8"></div>
<div style="left:9.5px;top:423.01px;width:142.0px;height:1px;background:#d8d8d8"></div>
<div style="left:151.5px;top:423.01px;width:65.0px;height:1px;background:#d8d8d8"></div>
<div style="left:216.5px;top:423.01px;width:65.0px;height:1px;background:#d8d8d8"></div>
<div style="left:281.5px;top:423.01px;width:64.0px;height:1px;background:#e8b8b8"></div>
<div style="left:345.5px;top:423.01px;width:62.25px;height:1px;background:#bfc8d8"></div>
<div style="left:407.75px;top:423.01px;width:62.25px;height:1px;background:#bfc8d8"></div>
<div style="left:470.0px;top:423.01px;width:62.25px;height:1px;background:#bfc8d8"></div>
<div style="left:532.25px;top:423.01px;width:62.25px;height:1px;background:#d4d4d4"></div>
<div style="left:594.5px;top:423.01px;width:62.25px;height:1px;background:#d4d4d4"></div>
<div style="left:656.75px;top:423.01px;width:62.25px;height:1px;background:#d4d4d4"></div>
<div style="left:719.0px;top:423.01px;width:62.25px;height:1px;background:#bfc8d8"></div>
<div style="left:781.25px;top:423.01px;width:62.25px;height:1px;background:#bfc8d8"></div>
<div style="left:843.5px;top:423.01px;width:62.25px;height:1px;background:#bfc8d8"></div>
<div style="left:905.75px;top:423.01px;width:62.25px;height:1px;background:#d4d4d4"></div>
<div style="left:968.0px;top:423.01px;width:62.25px;height:1px;background:#d4d4d4"></div>
<div style="left:1030.25px;top:423.01px;width:62.25px;height:1px;background:#d4d4d4"></div>
<div style="left:1092.5px;top:423.01px;width:62.25px;height:1px;background:#bfc8d8"></div>
<div style="left:1154.75px;top:423.01px;width:62.25px;height:1px;background:#bfc8d8"></div>
<div style="left:1217.0px;top:423.01px;width:62.25px;height:1px;background:#bfc8d8"></div>
<div style="left:9.5px;top:437.78px;width:142.0px;height:1px;background:#d8d8d8"></div>
<div style="left:151.5px;top:437.78px;width:65.0px;height:1px;background:#d8d8d8"></div>
<div style="left:216.5px;top:437.78px;width:65.0px;height:1px;background:#d8d8d8"></div>
<div style="left:281.5px;top:437.78px;width:64.0px;height:1px;background:#e8b8b8"></div>
<div style="left:345.5px;top:437.78px;width:62.25px;height:1px;background:#bfc8d8"></div>
<div style="left:407.75px;top:437.78px;width:62.25px;height:1px;background:#bfc8d8"></div>
<div style="left:470.0px;top:437.78px;width:62.25px;height:1px;background:#bfc8d8"></div>
<div style="left:532.25px;top:437.78px;width:62.25px;height:1px;background:#d4d4d4"></div>
<div style="left:594.5px;top:437.78px;width:62.25px;height:1px;background:#d4d4d4"></div>
<div style="left:656.75px;top:437.78px;width:62.25px;height:1px;background:#d4d4d4"></div>
<div style="left:719.0px;top:437.78px;width:62.25px;height:1px;background:#bfc8d8"></div>
<div style="left:781.25px;top:437.78px;width:62.25px;height:1px;background:#bfc8d8"></div>
<div style="left:843.5px;top:437.78px;width:62.25px;height:1px;background:#bfc8d8"></div>
<div style="left:905.75px;top:437.78px;width:62.25px;height:1px;background:#d4d4d4"></div>
<div style="left:968.0px;top:437.78px;width:62.25px;height:1px;background:#d4d4d4"></div>
<div style="left:1030.25px;top:437.78px;width:62.25px;height:1px;background:#d4d4d4"></div>
<div style="left:1092.5px;top:437.78px;width:62.25px;height:1px;background:#bfc8d8"></div>
<div style="left:1154.75px;top:437.78px;width:62.25px;height:1px;background:#bfc8d8"></div>
<div style="left:1217.0px;top:437.78px;width:62.25px;height:1px;background:#bfc8d8"></div>
<div style="left:9.5px;top:452.55px;width:142.0px;height:1px;background:#d8d8d8"></div>
<div style="left:151.5px;top:452.55px;width:65.0px;height:1px;background:#d8d8d8"></div>
<div style="left:216.5px;top:452.55px;width:65.0px;height:1px;background:#d8d8d8"></div>
<div style="left:281.5px;top:452.55px;width:64.0px;height:1px;background:#e8b8b8"></div>
<div style="left:345.5px;top:452.55px;width:62.25px;height:1px;background:#bfc8d8"></div>
<div style="left:407.75px;top:452.55px;width:62.25px;height:1px;background:#bfc8d8"></div>
<div style="left:470.0px;top:452.55px;width:62.25px;height:1px;background:#bfc8d8"></div>
<div style="left:532.25px;top:452.55px;width:62.25px;height:1px;background:#d4d4d4"></div>
<div style="left:594.5px;top:452.55px;width:62.25px;height:1px;background:#d4d4d4"></div>
<div style="left:656.75px;top:452.55px;width:62.25px;height:1px;background:#d4d4d4"></div>
<div style="left:719.0px;top:452.55px;width:62.25px;height:1px;background:#bfc8d8"></div>
<div style="left:781.25px;top:452.55px;width:62.25px;height:1px;background:#bfc8d8"></div>
<div style="left:843.5px;top:452.55px;width:62.25px;height:1px;background:#bfc8d8"></div>
<div style="left:905.75px;top:452.55px;width:62.25px;height:1px;background:#d4d4d4"></div>
<div style="left:968.0px;top:452.55px;width:62.25px;height:1px;background:#d4d4d4"></div>
<div style="left:1030.25px;top:452.55px;width:62.25px;height:1px;background:#d4d4d4"></div>
<div style="left:1092.5px;top:452.55px;width:62.25px;height:1px;background:#bfc8d8"></div>
<div style="left:1154.75px;top:452.55px;width:62.25px;height:1px;background:#bfc8d8"></div>
<div style="left:1217.0px;top:452.55px;width:62.25px;height:1px;background:#bfc8d8"></div>
<div style="left:9.5px;top:467.32px;width:142.0px;height:1px;background:#d8d8d8"></div>
<div style="left:151.5px;top:467.32px;width:65.0px;height:1px;background:#d8d8d8"></div>
<div style="left:216.5px;top:467.32px;width:65.0px;height:1px;background:#d8d8d8"></div>
<div style="left:281.5px;top:467.32px;width:64.0px;height:1px;background:#e8b8b8"></div>
<div style="left:345.5px;top:467.32px;width:62.25px;height:1px;background:#bfc8d8"></div>
<div style="left:407.75px;top:467.32px;width:62.25px;height:1px;background:#bfc8d8"></div>
<div style="left:470.0px;top:467.32px;width:62.25px;height:1px;background:#bfc8d8"></div>
<div style="left:532.25px;top:467.32px;width:62.25px;height:1px;background:#d4d4d4"></div>
<div style="left:594.5px;top:467.32px;width:62.25px;height:1px;background:#d4d4d4"></div>
<div style="left:656.75px;top:467.32px;width:62.25px;height:1px;background:#d4d4d4"></div>
<div style="left:719.0px;top:467.32px;width:62.25px;height:1px;background:#bfc8d8"></div>
<div style="left:781.25px;top:467.32px;width:62.25px;height:1px;background:#bfc8d8"></div>
<div style="left:843.5px;top:467.32px;width:62.25px;height:1px;background:#bfc8d8"></div>
<div style="left:905.75px;top:467.32px;width:62.25px;height:1px;background:#d4d4d4"></div>
<div style="left:968.0px;top:467.32px;width:62.25px;height:1px;background:#d4d4d4"></div>
<div style="left:1030.25px;top:467.32px;width:62.25px;height:1px;background:#d4d4d4"></div>
<div style="left:1092.5px;top:467.32px;width:62.25px;height:1px;background:#bfc8d8"></div>
<div style="left:1154.75px;top:467.32px;width:62.25px;height:1px;background:#bfc8d8"></div>
<div style="left:1217.0px;top:467.32px;width:62.25px;height:1px;background:#bfc8d8"></div>
<div style="left:9.5px;top:482.09px;width:142.0px;height:1px;background:#d8d8d8"></div>
<div style="left:151.5px;top:482.09px;width:65.0px;height:1px;background:#d8d8d8"></div>
<div style="left:216.5px;top:482.09px;width:65.0px;height:1px;background:#d8d8d8"></div>
<div style="left:281.5px;top:482.09px;width:64.0px;height:1px;background:#e8b8b8"></div>
<div style="left:345.5px;top:482.09px;width:62.25px;height:1px;background:#bfc8d8"></div>
<div style="left:407.75px;top:482.09px;width:62.25px;height:1px;background:#bfc8d8"></div>
<div style="left:470.0px;top:482.09px;width:62.25px;height:1px;background:#bfc8d8"></div>
<div style="left:532.25px;top:482.09px;width:62.25px;height:1px;background:#d4d4d4"></div>
<div style="left:594.5px;top:482.09px;width:62.25px;height:1px;background:#d4d4d4"></div>
<div style="left:656.75px;top:482.09px;width:62.25px;height:1px;background:#d4d4d4"></div>
<div style="left:719.0px;top:482.09px;width:62.25px;height:1px;background:#bfc8d8"></div>
<div style="left:781.25px;top:482.09px;width:62.25px;height:1px;background:#bfc8d8"></div>
<div style="left:843.5px;top:482.09px;width:62.25px;height:1px;background:#bfc8d8"></div>
<div style="left:905.75px;top:482.09px;width:62.25px;height:1px;background:#d4d4d4"></div>
<div style="left:968.0px;top:482.09px;width:62.25px;height:1px;background:#d4d4d4"></div>
<div style="left:1030.25px;top:482.09px;width:62.25px;height:1px;background:#d4d4d4"></div>
<div style="left:1092.5px;top:482.09px;width:62.25px;height:1px;background:#bfc8d8"></div>
<div style="left:1154.75px;top:482.09px;width:62.25px;height:1px;background:#bfc8d8"></div>
<div style="left:1217.0px;top:482.09px;width:62.25px;height:1px;background:#bfc8d8"></div>
<div style="left:9.5px;top:496.86px;width:142.0px;height:1px;background:#d8d8d8"></div>
<div style="left:151.5px;top:496.86px;width:65.0px;height:1px;background:#d8d8d8"></div>
<div style="left:216.5px;top:496.86px;width:65.0px;height:1px;background:#d8d8d8"></div>
<div style="left:281.5px;top:496.86px;width:64.0px;height:1px;background:#e8b8b8"></div>
<div style="left:345.5px;top:496.86px;width:62.25px;height:1px;background:#bfc8d8"></div>
<div style="left:407.75px;top:496.86px;width:62.25px;height:1px;background:#bfc8d8"></div>
<div style="left:470.0px;top:496.86px;width:62.25px;height:1px;background:#bfc8d8"></div>
<div style="left:532.25px;top:496.86px;width:62.25px;height:1px;background:#d4d4d4"></div>
<div style="left:594.5px;top:496.86px;width:62.25px;height:1px;background:#d4d4d4"></div>
<div style="left:656.75px;top:496.86px;width:62.25px;height:1px;background:#d4d4d4"></div>
<div style="left:719.0px;top:496.86px;width:62.25px;height:1px;background:#bfc8d8"></div>
<div style="left:781.25px;top:496.86px;width:62.25px;height:1px;background:#bfc8d8"></div>
<div style="left:843.5px;top:496.86px;width:62.25px;height:1px;background:#bfc8d8"></div>
<div style="left:905.75px;top:496.86px;width:62.25px;height:1px;background:#d4d4d4"></div>
<div style="left:968.0px;top:496.86px;width:62.25px;height:1px;background:#d4d4d4"></div>
<div style="left:1030.25px;top:496.86px;width:62.25px;height:1px;background:#d4d4d4"></div>
<div style="left:1092.5px;top:496.86px;width:62.25px;height:1px;background:#bfc8d8"></div>
<div style="left:1154.75px;top:496.86px;width:62.25px;height:1px;background:#bfc8d8"></div>
<div style="left:1217.0px;top:496.86px;width:62.25px;height:1px;background:#bfc8d8"></div>
<div style="left:9.5px;top:511.63px;width:142.0px;height:1px;background:#d8d8d8"></div>
<div style="left:151.5px;top:511.63px;width:65.0px;height:1px;background:#d8d8d8"></div>
<div style="left:216.5px;top:511.63px;width:65.0px;height:1px;background:#d8d8d8"></div>
<div style="left:281.5px;top:511.63px;width:64.0px;height:1px;background:#e8b8b8"></div>
<div style="left:345.5px;top:511.63px;width:62.25px;height:1px;background:#bfc8d8"></div>
<div style="left:407.75px;top:511.63px;width:62.25px;height:1px;background:#bfc8d8"></div>
<div style="left:470.0px;top:511.63px;width:62.25px;height:1px;background:#bfc8d8"></div>
<div style="left:532.25px;top:511.63px;width:62.25px;height:1px;background:#d4d4d4"></div>
<div style="left:594.5px;top:511.63px;width:62.25px;height:1px;background:#d4d4d4"></div>
<div style="left:656.75px;top:511.63px;width:62.25px;height:1px;background:#d4d4d4"></div>
<div style="left:719.0px;top:511.63px;width:62.25px;height:1px;background:#bfc8d8"></div>
<div style="left:781.25px;top:511.63px;width:62.25px;height:1px;background:#bfc8d8"></div>
<div style="left:843.5px;top:511.63px;width:62.25px;height:1px;background:#bfc8d8"></div>
<div style="left:905.75px;top:511.63px;width:62.25px;height:1px;background:#d4d4d4"></div>
<div style="left:968.0px;top:511.63px;width:62.25px;height:1px;background:#d4d4d4"></div>
<div style="left:1030.25px;top:511.63px;width:62.25px;height:1px;background:#d4d4d4"></div>
<div style="left:1092.5px;top:511.63px;width:62.25px;height:1px;background:#bfc8d8"></div>
<div style="left:1154.75px;top:511.63px;width:62.25px;height:1px;background:#bfc8d8"></div>
<div style="left:1217.0px;top:511.63px;width:62.25px;height:1px;background:#bfc8d8"></div>
<div style="left:9.5px;top:526.40px;width:142.0px;height:1px;background:#d8d8d8"></div>
<div style="left:151.5px;top:526.40px;width:65.0px;height:1px;background:#d8d8d8"></div>
<div style="left:216.5px;top:526.40px;width:65.0px;height:1px;background:#d8d8d8"></div>
<div style="left:281.5px;top:526.40px;width:64.0px;height:1px;background:#e8b8b8"></div>
<div style="left:345.5px;top:526.40px;width:62.25px;height:1px;background:#bfc8d8"></div>
<div style="left:407.75px;top:526.40px;width:62.25px;height:1px;background:#bfc8d8"></div>
<div style="left:470.0px;top:526.40px;width:62.25px;height:1px;background:#bfc8d8"></div>
<div style="left:532.25px;top:526.40px;width:62.25px;height:1px;background:#d4d4d4"></div>
<div style="left:594.5px;top:526.40px;width:62.25px;height:1px;background:#d4d4d4"></div>
<div style="left:656.75px;top:526.40px;width:62.25px;height:1px;background:#d4d4d4"></div>
<div style="left:719.0px;top:526.40px;width:62.25px;height:1px;background:#bfc8d8"></div>
<div style="left:781.25px;top:526.40px;width:62.25px;height:1px;background:#bfc8d8"></div>
<div style="left:843.5px;top:526.40px;width:62.25px;height:1px;background:#bfc8d8"></div>
<div style="left:905.75px;top:526.40px;width:62.25px;height:1px;background:#d4d4d4"></div>
<div style="left:968.0px;top:526.40px;width:62.25px;height:1px;background:#d4d4d4"></div>
<div style="left:1030.25px;top:526.40px;width:62.25px;height:1px;background:#d4d4d4"></div>
<div style="left:1092.5px;top:526.40px;width:62.25px;height:1px;background:#bfc8d8"></div>
<div style="left:1154.75px;top:526.40px;width:62.25px;height:1px;background:#bfc8d8"></div>
<div style="left:1217.0px;top:526.40px;width:62.25px;height:1px;background:#bfc8d8"></div>
<div style="left:9.5px;top:541.17px;width:142.0px;height:1px;background:#d8d8d8"></div>
<div style="left:151.5px;top:541.17px;width:65.0px;height:1px;background:#d8d8d8"></div>
<div style="left:216.5px;top:541.17px;width:65.0px;height:1px;background:#d8d8d8"></div>
<div style="left:281.5px;top:541.17px;width:64.0px;height:1px;background:#e8b8b8"></div>
<div style="left:345.5px;top:541.17px;width:62.25px;height:1px;background:#bfc8d8"></div>
<div style="left:407.75px;top:541.17px;width:62.25px;height:1px;background:#bfc8d8"></div>
<div style="left:470.0px;top:541.17px;width:62.25px;height:1px;background:#bfc8d8"></div>
<div style="left:532.25px;top:541.17px;width:62.25px;height:1px;background:#d4d4d4"></div>
<div style="left:594.5px;top:541.17px;width:62.25px;height:1px;background:#d4d4d4"></div>
<div style="left:656.75px;top:541.17px;width:62.25px;height:1px;background:#d4d4d4"></div>
<div style="left:719.0px;top:541.17px;width:62.25px;height:1px;background:#bfc8d8"></div>
<div style="left:781.25px;top:541.17px;width:62.25px;height:1px;background:#bfc8d8"></div>
<div style="left:843.5px;top:541.17px;width:62.25px;height:1px;background:#bfc8d8"></div>
<div style="left:905.75px;top:541.17px;width:62.25px;height:1px;background:#d4d4d4"></div>
<div style="left:968.0px;top:541.17px;width:62.25px;height:1px;background:#d4d4d4"></div>
<div style="left:1030.25px;top:541.17px;width:62.25px;height:1px;background:#d4d4d4"></div>
<div style="left:1092.5px;top:541.17px;width:62.25px;height:1px;background:#bfc8d8"></div>
<div style="left:1154.75px;top:541.17px;width:62.25px;height:1px;background:#bfc8d8"></div>
<div style="left:1217.0px;top:541.17px;width:62.25px;height:1px;background:#bfc8d8"></div>
<div style="left:9.5px;top:555.94px;width:142.0px;height:1px;background:#d8d8d8"></div>
<div style="left:151.5px;top:555.94px;width:65.0px;height:1px;background:#d8d8d8"></div>
<div style="left:216.5px;top:555.94px;width:65.0px;height:1px;background:#d8d8d8"></div>
<div style="left:281.5px;top:555.94px;width:64.0px;height:1px;background:#e8b8b8"></div>
<div style="left:345.5px;top:555.94px;width:62.25px;height:1px;background:#bfc8d8"></div>
<div style="left:407.75px;top:555.94px;width:62.25px;height:1px;background:#bfc8d8"></div>
<div style="left:470.0px;top:555.94px;width:62.25px;height:1px;background:#bfc8d8"></div>
<div style="left:532.25px;top:555.94px;width:62.25px;height:1px;background:#d4d4d4"></div>
<div style="left:594.5px;top:555.94px;width:62.25px;height:1px;background:#d4d4d4"></div>
<div style="left:656.75px;top:555.94px;width:62.25px;height:1px;background:#d4d4d4"></div>
<div style="left:719.0px;top:555.94px;width:62.25px;height:1px;background:#bfc8d8"></div>
<div style="left:781.25px;top:555.94px;width:62.25px;height:1px;background:#bfc8d8"></div>
<div style="left:843.5px;top:555.94px;width:62.25px;height:1px;background:#bfc8d8"></div>
<div style="left:905.75px;top:555.94px;width:62.25px;height:1px;background:#d4d4d4"></div>
<div style="left:968.0px;top:555.94px;width:62.25px;height:1px;background:#d4d4d4"></div>
<div style="left:1030.25px;top:555.94px;width:62.25px;height:1px;background:#d4d4d4"></div>
<div style="left:1092.5px;top:555.94px;width:62.25px;height:1px;background:#bfc8d8"></div>
<div style="left:1154.75px;top:555.94px;width:62.25px;height:1px;background:#bfc8d8"></div>
<div style="left:1217.0px;top:555.94px;width:62.25px;height:1px;background:#bfc8d8"></div>
<div style="left:9.5px;top:570.71px;width:142.0px;height:1px;background:#d8d8d8"></div>
<div style="left:151.5px;top:570.71px;width:65.0px;height:1px;background:#d8d8d8"></div>
<div style="left:216.5px;top:570.71px;width:65.0px;height:1px;background:#d8d8d8"></div>
<div style="left:281.5px;top:570.71px;width:64.0px;height:1px;background:#e8b8b8"></div>
<div style="left:345.5px;top:570.71px;width:62.25px;height:1px;background:#bfc8d8"></div>
<div style="left:407.75px;top:570.71px;width:62.25px;height:1px;background:#bfc8d8"></div>
<div style="left:470.0px;top:570.71px;width:62.25px;height:1px;background:#bfc8d8"></div>
<div style="left:532.25px;top:570.71px;width:62.25px;height:1px;background:#d4d4d4"></div>
<div style="left:594.5px;top:570.71px;width:62.25px;height:1px;background:#d4d4d4"></div>
<div style="left:656.75px;top:570.71px;width:62.25px;height:1px;background:#d4d4d4"></div>
<div style="left:719.0px;top:570.71px;width:62.25px;height:1px;background:#bfc8d8"></div>
<div style="left:781.25px;top:570.71px;width:62.25px;height:1px;background:#bfc8d8"></div>
<div style="left:843.5px;top:570.71px;width:62.25px;height:1px;background:#bfc8d8"></div>
<div style="left:905.75px;top:570.71px;width:62.25px;height:1px;background:#d4d4d4"></div>
<div style="left:968.0px;top:570.71px;width:62.25px;height:1px;background:#d4d4d4"></div>
<div style="left:1030.25px;top:570.71px;width:62.25px;height:1px;background:#d4d4d4"></div>
<div style="left:1092.5px;top:570.71px;width:62.25px;height:1px;background:#bfc8d8"></div>
<div style="left:1154.75px;top:570.71px;width:62.25px;height:1px;background:#bfc8d8"></div>
<div style="left:1217.0px;top:570.71px;width:62.25px;height:1px;background:#bfc8d8"></div>
<div style="left:9.5px;top:585.48px;width:142.0px;height:1px;background:#d8d8d8"></div>
<div style="left:151.5px;top:585.48px;width:65.0px;height:1px;background:#d8d8d8"></div>
<div style="left:216.5px;top:585.48px;width:65.0px;height:1px;background:#d8d8d8"></div>
<div style="left:281.5px;top:585.48px;width:64.0px;height:1px;background:#e8b8b8"></div>
<div style="left:345.5px;top:585.48px;width:62.25px;height:1px;background:#bfc8d8"></div>
<div style="left:407.75px;top:585.48px;width:62.25px;height:1px;background:#bfc8d8"></div>
<div style="left:470.0px;top:585.48px;width:62.25px;height:1px;background:#bfc8d8"></div>
<div style="left:532.25px;top:585.48px;width:62.25px;height:1px;background:#d4d4d4"></div>
<div style="left:594.5px;top:585.48px;width:62.25px;height:1px;background:#d4d4d4"></div>
<div style="left:656.75px;top:585.48px;width:62.25px;height:1px;background:#d4d4d4"></div>
<div style="left:719.0px;top:585.48px;width:62.25px;height:1px;background:#bfc8d8"></div>
<div style="left:781.25px;top:585.48px;width:62.25px;height:1px;background:#bfc8d8"></div>
<div style="left:843.5px;top:585.48px;width:62.25px;height:1px;background:#bfc8d8"></div>
<div style="left:905.75px;top:585.48px;width:62.25px;height:1px;background:#d4d4d4"></div>
<div style="left:968.0px;top:585.48px;width:62.25px;height:1px;background:#d4d4d4"></div>
<div style="left:1030.25px;top:585.48px;width:62.25px;height:1px;background:#d4d4d4"></div>
<div style="left:1092.5px;top:585.48px;width:62.25px;height:1px;background:#bfc8d8"></div>
<div style="left:1154.75px;top:585.48px;width:62.25px;height:1px;background:#bfc8d8"></div>
<div style="left:1217.0px;top:585.48px;width:62.25px;height:1px;background:#bfc8d8"></div>
<div style="left:9.5px;top:600.25px;width:142.0px;height:1px;background:#d8d8d8"></div>
<div style="left:151.5px;top:600.25px;width:65.0px;height:1px;background:#d8d8d8"></div>
<div style="left:216.5px;top:600.25px;width:65.0px;height:1px;background:#d8d8d8"></div>
<div style="left:281.5px;top:600.25px;width:64.0px;height:1px;background:#e8b8b8"></div>
<div style="left:345.5px;top:600.25px;width:62.25px;height:1px;background:#bfc8d8"></div>
<div style="left:407.75px;top:600.25px;width:62.25px;height:1px;background:#bfc8d8"></div>
<div style="left:470.0px;top:600.25px;width:62.25px;height:1px;background:#bfc8d8"></div>
<div style="left:532.25px;top:600.25px;width:62.25px;height:1px;background:#d4d4d4"></div>
<div style="left:594.5px;top:600.25px;width:62.25px;height:1px;background:#d4d4d4"></div>
<div style="left:656.75px;top:600.25px;width:62.25px;height:1px;background:#d4d4d4"></div>
<div style="left:719.0px;top:600.25px;width:62.25px;height:1px;background:#bfc8d8"></div>
<div style="left:781.25px;top:600.25px;width:62.25px;height:1px;background:#bfc8d8"></div>
<div style="left:843.5px;top:600.25px;width:62.25px;height:1px;background:#bfc8d8"></div>
<div style="left:905.75px;top:600.25px;width:62.25px;height:1px;background:#d4d4d4"></div>
<div style="left:968.0px;top:600.25px;width:62.25px;height:1px;background:#d4d4d4"></div>
<div style="left:1030.25px;top:600.25px;width:62.25px;height:1px;background:#d4d4d4"></div>
<div style="left:1092.5px;top:600.25px;width:62.25px;height:1px;background:#bfc8d8"></div>
<div style="left:1154.75px;top:600.25px;width:62.25px;height:1px;background:#bfc8d8"></div>
<div style="left:1217.0px;top:600.25px;width:62.25px;height:1px;background:#bfc8d8"></div>
<div style="left:9.5px;top:615.02px;width:142.0px;height:1px;background:#d8d8d8"></div>
<div style="left:151.5px;top:615.02px;width:65.0px;height:1px;background:#d8d8d8"></div>
<div style="left:216.5px;top:615.02px;width:65.0px;height:1px;background:#d8d8d8"></div>
<div style="left:281.5px;top:615.02px;width:64.0px;height:1px;background:#e8b8b8"></div>
<div style="left:345.5px;top:615.02px;width:62.25px;height:1px;background:#bfc8d8"></div>
<div style="left:407.75px;top:615.02px;width:62.25px;height:1px;background:#bfc8d8"></div>
<div style="left:470.0px;top:615.02px;width:62.25px;height:1px;background:#bfc8d8"></div>
<div style="left:532.25px;top:615.02px;width:62.25px;height:1px;background:#d4d4d4"></div>
<div style="left:594.5px;top:615.02px;width:62.25px;height:1px;background:#d4d4d4"></div>
<div style="left:656.75px;top:615.02px;width:62.25px;height:1px;background:#d4d4d4"></div>
<div style="left:719.0px;top:615.02px;width:62.25px;height:1px;background:#bfc8d8"></div>
<div style="left:781.25px;top:615.02px;width:62.25px;height:1px;background:#bfc8d8"></div>
<div style="left:843.5px;top:615.02px;width:62.25px;height:1px;background:#bfc8d8"></div>
<div style="left:905.75px;top:615.02px;width:62.25px;height:1px;background:#d4d4d4"></div>
<div style="left:968.0px;top:615.02px;width:62.25px;height:1px;background:#d4d4d4"></div>
<div style="left:1030.25px;top:615.02px;width:62.25px;height:1px;background:#d4d4d4"></div>
<div style="left:1092.5px;top:615.02px;width:62.25px;height:1px;background:#bfc8d8"></div>
<div style="left:1154.75px;top:615.02px;width:62.25px;height:1px;background:#bfc8d8"></div>
<div style="left:1217.0px;top:615.02px;width:62.25px;height:1px;background:#bfc8d8"></div>
<div style="left:9.5px;top:629.79px;width:142.0px;height:1px;background:#d8d8d8"></div>
<div style="left:151.5px;top:629.79px;width:65.0px;height:1px;background:#d8d8d8"></div>
<div style="left:216.5px;top:629.79px;width:65.0px;height:1px;background:#d8d8d8"></div>
<div style="left:281.5px;top:629.79px;width:64.0px;height:1px;background:#e8b8b8"></div>
<div style="left:345.5px;top:629.79px;width:62.25px;height:1px;background:#bfc8d8"></div>
<div style="left:407.75px;top:629.79px;width:62.25px;height:1px;background:#bfc8d8"></div>
<div style="left:470.0px;top:629.79px;width:62.25px;height:1px;background:#bfc8d8"></div>
<div style="left:532.25px;top:629.79px;width:62.25px;height:1px;background:#d4d4d4"></div>
<div style="left:594.5px;top:629.79px;width:62.25px;height:1px;background:#d4d4d4"></div>
<div style="left:656.75px;top:629.79px;width:62.25px;height:1px;background:#d4d4d4"></div>
<div style="left:719.0px;top:629.79px;width:62.25px;height:1px;background:#bfc8d8"></div>
<div style="left:781.25px;top:629.79px;width:62.25px;height:1px;background:#bfc8d8"></div>
<div style="left:843.5px;top:629.79px;width:62.25px;height:1px;background:#bfc8d8"></div>
<div style="left:905.75px;top:629.79px;width:62.25px;height:1px;background:#d4d4d4"></div>
<div style="left:968.0px;top:629.79px;width:62.25px;height:1px;background:#d4d4d4"></div>
<div style="left:1030.25px;top:629.79px;width:62.25px;height:1px;background:#d4d4d4"></div>
<div style="left:1092.5px;top:629.79px;width:62.25px;height:1px;background:#bfc8d8"></div>
<div style="left:1154.75px;top:629.79px;width:62.25px;height:1px;background:#bfc8d8"></div>
<div style="left:1217.0px;top:629.79px;width:62.25px;height:1px;background:#bfc8d8"></div>
<div style="left:9.5px;top:644.56px;width:142.0px;height:1px;background:#d8d8d8"></div>
<div style="left:151.5px;top:644.56px;width:65.0px;height:1px;background:#d8d8d8"></div>
<div style="left:216.5px;top:644.56px;width:65.0px;height:1px;background:#d8d8d8"></div>
<div style="left:281.5px;top:644.56px;width:64.0px;height:1px;background:#e8b8b8"></div>
<div style="left:345.5px;top:644.56px;width:62.25px;height:1px;background:#bfc8d8"></div>
<div style="left:407.75px;top:644.56px;width:62.25px;height:1px;background:#bfc8d8"></div>
<div style="left:470.0px;top:644.56px;width:62.25px;height:1px;background:#bfc8d8"></div>
<div style="left:532.25px;top:644.56px;width:62.25px;height:1px;background:#d4d4d4"></div>
<div style="left:594.5px;top:644.56px;width:62.25px;height:1px;background:#d4d4d4"></div>
<div style="left:656.75px;top:644.56px;width:62.25px;height:1px;background:#d4d4d4"></div>
<div style="left:719.0px;top:644.56px;width:62.25px;height:1px;background:#bfc8d8"></div>
<div style="left:781.25px;top:644.56px;width:62.25px;height:1px;background:#bfc8d8"></div>
<div style="left:843.5px;top:644.56px;width:62.25px;height:1px;background:#bfc8d8"></div>
<div style="left:905.75px;top:644.56px;width:62.25px;height:1px;background:#d4d4d4"></div>
<div style="left:968.0px;top:644.56px;width:62.25px;height:1px;background:#d4d4d4"></div>
<div style="left:1030.25px;top:644.56px;width:62.25px;height:1px;background:#d4d4d4"></div>
<div style="left:1092.5px;top:644.56px;width:62.25px;height:1px;background:#bfc8d8"></div>
<div style="left:1154.75px;top:644.56px;width:62.25px;height:1px;background:#bfc8d8"></div>
<div style="left:1217.0px;top:644.56px;width:62.25px;height:1px;background:#bfc8d8"></div>
<div style="left:9.5px;top:659.33px;width:142.0px;height:1px;background:#d8d8d8"></div>
<div style="left:151.5px;top:659.33px;width:65.0px;height:1px;background:#d8d8d8"></div>
<div style="left:216.5px;top:659.33px;width:65.0px;height:1px;background:#d8d8d8"></div>
<div style="left:281.5px;top:659.33px;width:64.0px;height:1px;background:#e8b8b8"></div>
<div style="left:345.5px;top:659.33px;width:62.25px;height:1px;background:#bfc8d8"></div>
<div style="left:407.75px;top:659.33px;width:62.25px;height:1px;background:#bfc8d8"></div>
<div style="left:470.0px;top:659.33px;width:62.25px;height:1px;background:#bfc8d8"></div>
<div style="left:532.25px;top:659.33px;width:62.25px;height:1px;background:#d4d4d4"></div>
<div style="left:594.5px;top:659.33px;width:62.25px;height:1px;background:#d4d4d4"></div>
<div style="left:656.75px;top:659.33px;width:62.25px;height:1px;background:#d4d4d4"></div>
<div style="left:719.0px;top:659.33px;width:62.25px;height:1px;background:#bfc8d8"></div>
<div style="left:781.25px;top:659.33px;width:62.25px;height:1px;background:#bfc8d8"></div>
<div style="left:843.5px;top:659.33px;width:62.25px;height:1px;background:#bfc8d8"></div>
<div style="left:905.75px;top:659.33px;width:62.25px;height:1px;background:#d4d4d4"></div>
<div style="left:968.0px;top:659.33px;width:62.25px;height:1px;background:#d4d4d4"></div>
<div style="left:1030.25px;top:659.33px;width:62.25px;height:1px;background:#d4d4d4"></div>
<div style="left:1092.5px;top:659.33px;width:62.25px;height:1px;background:#bfc8d8"></div>
<div style="left:1154.75px;top:659.33px;width:62.25px;height:1px;background:#bfc8d8"></div>
<div style="left:1217.0px;top:659.33px;width:62.25px;height:1px;background:#bfc8d8"></div>
<div style="left:9.5px;top:674.10px;width:142.0px;height:1px;background:#d8d8d8"></div>
<div style="left:151.5px;top:674.10px;width:65.0px;height:1px;background:#d8d8d8"></div>
<div style="left:216.5px;top:674.10px;width:65.0px;height:1px;background:#d8d8d8"></div>
<div style="left:281.5px;top:674.10px;width:64.0px;height:1px;background:#e8b8b8"></div>
<div style="left:345.5px;top:674.10px;width:62.25px;height:1px;background:#bfc8d8"></div>
<div style="left:407.75px;top:674.10px;width:62.25px;height:1px;background:#bfc8d8"></div>
<div style="left:470.0px;top:674.10px;width:62.25px;height:1px;background:#bfc8d8"></div>
<div style="left:532.25px;top:674.10px;width:62.25px;height:1px;background:#d4d4d4"></div>
<div style="left:594.5px;top:674.10px;width:62.25px;height:1px;background:#d4d4d4"></div>
<div style="left:656.75px;top:674.10px;width:62.25px;height:1px;background:#d4d4d4"></div>
<div style="left:719.0px;top:674.10px;width:62.25px;height:1px;background:#bfc8d8"></div>
<div style="left:781.25px;top:674.10px;width:62.25px;height:1px;background:#bfc8d8"></div>
<div style="left:843.5px;top:674.10px;width:62.25px;height:1px;background:#bfc8d8"></div>
<div style="left:905.75px;top:674.10px;width:62.25px;height:1px;background:#d4d4d4"></div>
<div style="left:968.0px;top:674.10px;width:62.25px;height:1px;background:#d4d4d4"></div>
<div style="left:1030.25px;top:674.10px;width:62.25px;height:1px;background:#d4d4d4"></div>
<div style="left:1092.5px;top:674.10px;width:62.25px;height:1px;background:#bfc8d8"></div>
<div style="left:1154.75px;top:674.10px;width:62.25px;height:1px;background:#bfc8d8"></div>
<div style="left:1217.0px;top:674.10px;width:62.25px;height:1px;background:#bfc8d8"></div>
<div style="left:9.5px;top:688.87px;width:142.0px;height:1px;background:#d8d8d8"></div>
<div style="left:151.5px;top:688.87px;width:65.0px;height:1px;background:#d8d8d8"></div>
<div style="left:216.5px;top:688.87px;width:65.0px;height:1px;background:#d8d8d8"></div>
<div style="left:281.5px;top:688.87px;width:64.0px;height:1px;background:#e8b8b8"></div>
<div style="left:345.5px;top:688.87px;width:62.25px;height:1px;background:#bfc8d8"></div>
<div style="left:407.75px;top:688.87px;width:62.25px;height:1px;background:#bfc8d8"></div>
<div style="left:470.0px;top:688.87px;width:62.25px;height:1px;background:#bfc8d8"></div>
<div style="left:532.25px;top:688.87px;width:62.25px;height:1px;background:#d4d4d4"></div>
<div style="left:594.5px;top:688.87px;width:62.25px;height:1px;background:#d4d4d4"></div>
<div style="left:656.75px;top:688.87px;width:62.25px;height:1px;background:#d4d4d4"></div>
<div style="left:719.0px;top:688.87px;width:62.25px;height:1px;background:#bfc8d8"></div>
<div style="left:781.25px;top:688.87px;width:62.25px;height:1px;background:#bfc8d8"></div>
<div style="left:843.5px;top:688.87px;width:62.25px;height:1px;background:#bfc8d8"></div>
<div style="left:905.75px;top:688.87px;width:62.25px;height:1px;background:#d4d4d4"></div>
<div style="left:968.0px;top:688.87px;width:62.25px;height:1px;background:#d4d4d4"></div>
<div style="left:1030.25px;top:688.87px;width:62.25px;height:1px;background:#d4d4d4"></div>
<div style="left:1092.5px;top:688.87px;width:62.25px;height:1px;background:#bfc8d8"></div>
<div style="left:1154.75px;top:688.87px;width:62.25px;height:1px;background:#bfc8d8"></div>
<div style="left:1217.0px;top:688.87px;width:62.25px;height:1px;background:#bfc8d8"></div>
<div style="left:9.5px;top:703.64px;width:142.0px;height:1px;background:#d8d8d8"></div>
<div style="left:151.5px;top:703.64px;width:65.0px;height:1px;background:#d8d8d8"></div>
<div style="left:216.5px;top:703.64px;width:65.0px;height:1px;background:#d8d8d8"></div>
<div style="left:281.5px;top:703.64px;width:64.0px;height:1px;background:#e8b8b8"></div>
<div style="left:345.5px;top:703.64px;width:62.25px;height:1px;background:#bfc8d8"></div>
<div style="left:407.75px;top:703.64px;width:62.25px;height:1px;background:#bfc8d8"></div>
<div style="left:470.0px;top:703.64px;width:62.25px;height:1px;background:#bfc8d8"></div>
<div style="left:532.25px;top:703.64px;width:62.25px;height:1px;background:#d4d4d4"></div>
<div style="left:594.5px;top:703.64px;width:62.25px;height:1px;background:#d4d4d4"></div>
<div style="left:656.75px;top:703.64px;width:62.25px;height:1px;background:#d4d4d4"></div>
<div style="left:719.0px;top:703.64px;width:62.25px;height:1px;background:#bfc8d8"></div>
<div style="left:781.25px;top:703.64px;width:62.25px;height:1px;background:#bfc8d8"></div>
<div style="left:843.5px;top:703.64px;width:62.25px;height:1px;background:#bfc8d8"></div>
<div style="left:905.75px;top:703.64px;width:62.25px;height:1px;background:#d4d4d4"></div>
<div style="left:968.0px;top:703.64px;width:62.25px;height:1px;background:#d4d4d4"></div>
<div style="left:1030.25px;top:703.64px;width:62.25px;height:1px;background:#d4d4d4"></div>
<div style="left:1092.5px;top:703.64px;width:62.25px;height:1px;background:#bfc8d8"></div>
<div style="left:1154.75px;top:703.64px;width:62.25px;height:1px;background:#bfc8d8"></div>
<div style="left:1217.0px;top:703.64px;width:62.25px;height:1px;background:#bfc8d8"></div>
<div style="left:9.5px;top:718.41px;width:142.0px;height:1px;background:#d8d8d8"></div>
<div style="left:151.5px;top:718.41px;width:65.0px;height:1px;background:#d8d8d8"></div>
<div style="left:216.5px;top:718.41px;width:65.0px;height:1px;background:#d8d8d8"></div>
<div style="left:281.5px;top:718.41px;width:64.0px;height:1px;background:#e8b8b8"></div>
<div style="left:345.5px;top:718.41px;width:62.25px;height:1px;background:#bfc8d8"></div>
<div style="left:407.75px;top:718.41px;width:62.25px;height:1px;background:#bfc8d8"></div>
<div style="left:470.0px;top:718.41px;width:62.25px;height:1px;background:#bfc8d8"></div>
<div style="left:532.25px;top:718.41px;width:62.25px;height:1px;background:#d4d4d4"></div>
<div style="left:594.5px;top:718.41px;width:62.25px;height:1px;background:#d4d4d4"></div>
<div style="left:656.75px;top:718.41px;width:62.25px;height:1px;background:#d4d4d4"></div>
<div style="left:719.0px;top:718.41px;width:62.25px;height:1px;background:#bfc8d8"></div>
<div style="left:781.25px;top:718.41px;width:62.25px;height:1px;background:#bfc8d8"></div>
<div style="left:843.5px;top:718.41px;width:62.25px;height:1px;background:#bfc8d8"></div>
<div style="left:905.75px;top:718.41px;width:62.25px;height:1px;background:#d4d4d4"></div>
<div style="left:968.0px;top:718.41px;width:62.25px;height:1px;background:#d4d4d4"></div>
<div style="left:1030.25px;top:718.41px;width:62.25px;height:1px;background:#d4d4d4"></div>
<div style="left:1092.5px;top:718.41px;width:62.25px;height:1px;background:#bfc8d8"></div>
<div style="left:1154.75px;top:718.41px;width:62.25px;height:1px;background:#bfc8d8"></div>
<div style="left:1217.0px;top:718.41px;width:62.25px;height:1px;background:#bfc8d8"></div>
<div style="left:9.5px;top:733.18px;width:142.0px;height:1px;background:#d8d8d8"></div>
<div style="left:151.5px;top:733.18px;width:65.0px;height:1px;background:#d8d8d8"></div>
<div style="left:216.5px;top:733.18px;width:65.0px;height:1px;background:#d8d8d8"></div>
<div style="left:281.5px;top:733.18px;width:64.0px;height:1px;background:#e8b8b8"></div>
<div style="left:345.5px;top:733.18px;width:62.25px;height:1px;background:#bfc8d8"></div>
<div style="left:407.75px;top:733.18px;width:62.25px;height:1px;background:#bfc8d8"></div>
<div style="left:470.0px;top:733.18px;width:62.25px;height:1px;background:#bfc8d8"></div>
<div style="left:532.25px;top:733.18px;width:62.25px;height:1px;background:#d4d4d4"></div>
<div style="left:594.5px;top:733.18px;width:62.25px;height:1px;background:#d4d4d4"></div>
<div style="left:656.75px;top:733.18px;width:62.25px;height:1px;background:#d4d4d4"></div>
<div style="left:719.0px;top:733.18px;width:62.25px;height:1px;background:#bfc8d8"></div>
<div style="left:781.25px;top:733.18px;width:62.25px;height:1px;background:#bfc8d8"></div>
<div style="left:843.5px;top:733.18px;width:62.25px;height:1px;background:#bfc8d8"></div>
<div style="left:905.75px;top:733.18px;width:62.25px;height:1px;background:#d4d4d4"></div>
<div style="left:968.0px;top:733.18px;width:62.25px;height:1px;background:#d4d4d4"></div>
<div style="left:1030.25px;top:733.18px;width:62.25px;height:1px;background:#d4d4d4"></div>
<div style="left:1092.5px;top:733.18px;width:62.25px;height:1px;background:#bfc8d8"></div>
<div style="left:1154.75px;top:733.18px;width:62.25px;height:1px;background:#bfc8d8"></div>
<div style="left:1217.0px;top:733.18px;width:62.25px;height:1px;background:#bfc8d8"></div>
<div style="left:9.0px;top:231.5px;width:1px;height:491.0px;background:#c8c8c8"></div>
<div style="left:151.0px;top:231.5px;width:1px;height:491.0px;background:#d8d8d8"></div>
<div style="left:216.0px;top:231.5px;width:1px;height:491.0px;background:#d8d8d8"></div>
<div style="left:281.0px;top:231.5px;width:1px;height:491.0px;background:#e8b8b8"></div>
<div style="left:345.0px;top:231.5px;width:1px;height:491.0px;background:#bfc8d8"></div>
<div style="left:407.25px;top:231.5px;width:1px;height:491.0px;background:#bfc8d8"></div>
<div style="left:469.5px;top:231.5px;width:1px;height:491.0px;background:#bfc8d8"></div>
<div style="left:531.75px;top:231.5px;width:1px;height:491.0px;background:#d4d4d4"></div>
<div style="left:594.0px;top:231.5px;width:1px;height:491.0px;background:#d4d4d4"></div>
<div style="left:656.25px;top:231.5px;width:1px;height:491.0px;background:#d4d4d4"></div>
<div style="left:718.5px;top:231.5px;width:1px;height:491.0px;background:#bfc8d8"></div>
<div style="left:780.75px;top:231.5px;width:1px;height:491.0px;background:#bfc8d8"></div>
<div style="left:843.0px;top:231.5px;width:1px;height:491.0px;background:#bfc8d8"></div>
<div style="left:905.25px;top:231.5px;width:1px;height:491.0px;background:#d4d4d4"></div>
<div style="left:967.5px;top:231.5px;width:1px;height:491.0px;background:#d4d4d4"></div>
<div style="left:1029.75px;top:231.5px;width:1px;height:491.0px;background:#d4d4d4"></div>
<div style="left:1092.0px;top:231.5px;width:1px;height:491.0px;background:#bfc8d8"></div>
<div style="left:1154.25px;top:231.5px;width:1px;height:491.0px;background:#bfc8d8"></div>
<div style="left:1216.5px;top:231.5px;width:1px;height:491.0px;background:#bfc8d8"></div>
<div class="c nm" style="left:9.5px;top:233.50px;width:142.0px;text-align:left">2009 Ford Dump Truck (6581)</div>
<div class="c nb" style="left:151.5px;top:233.50px;width:65.0px;text-align:right">178,254</div>
<div class="c nb" style="left:281.5px;top:233.50px;width:64.0px;text-align:center;padding:0">1</div>
<div class="c dt" style="left:345.5px;top:233.50px;width:62.25px;text-align:center;padding:0">7/18/2022</div>
<div class="c nb" style="left:407.75px;top:233.50px;width:62.25px;text-align:right">180,257</div>
<div class="c dt" style="left:532.25px;top:233.50px;width:62.25px;text-align:center;padding:0">8/7/2022</div>
<div class="c dt" style="left:905.75px;top:233.50px;width:62.25px;text-align:center;padding:0">4/1/2023</div>
<div class="c nm" style="left:9.5px;top:248.27px;width:142.0px;text-align:left">2012 Ford Dump Truck (9833)</div>
<div class="c nb" style="left:151.5px;top:248.27px;width:65.0px;text-align:right">155,356</div>
<div class="c nb" style="left:281.5px;top:248.27px;width:64.0px;text-align:center;padding:0">4</div>
<div class="red" style="left:345.5px;top:246.27px;width:62.25px;height:14.77px"></div>
<div class="c rt dt" style="left:345.5px;top:248.27px;width:62.25px;text-align:center;padding:0">7/7/2022</div>
<div class="c nb" style="left:407.75px;top:248.27px;width:62.25px;text-align:right">160,356</div>
<div class="red" style="left:532.25px;top:246.27px;width:62.25px;height:14.77px"></div>
<div class="c dt" style="left:905.75px;top:248.27px;width:62.25px;text-align:center;padding:0">5/15/2023</div>
<div class="c nm" style="left:9.5px;top:263.04px;width:142.0px;text-align:left">2016 Ford F550 (8557)</div>
<div class="c nb" style="left:151.5px;top:263.04px;width:65.0px;text-align:right">144,562</div>
<div class="c nb" style="left:281.5px;top:263.04px;width:64.0px;text-align:center;padding:0">2</div>
<div class="c dt" style="left:345.5px;top:263.04px;width:62.25px;text-align:center;padding:0">9/5/2022</div>
<div class="c nb" style="left:407.75px;top:263.04px;width:62.25px;text-align:right">147,562</div>
<div class="c nb" style="left:470.0px;top:263.04px;width:62.25px;text-align:right">100</div>
<div class="red" style="left:532.25px;top:261.04px;width:62.25px;height:14.77px"></div>
<div class="c dt" style="left:905.75px;top:263.04px;width:62.25px;text-align:center;padding:0">6/5/2024</div>
<div class="c nm" style="left:9.5px;top:277.81px;width:142.0px;text-align:left">2016 John Deere Gator (6454)</div>
<div class="c nb" style="left:151.5px;top:277.81px;width:65.0px;text-align:right">4,524</div>
<div class="c nb" style="left:216.5px;top:277.81px;width:65.0px;text-align:right">1,292</div>
<div class="c nb" style="left:281.5px;top:277.81px;width:64.0px;text-align:center;padding:0">1</div>
<div class="c dt" style="left:345.5px;top:277.81px;width:62.25px;text-align:center;padding:0">7/18/2022</div>
<div class="c nb" style="left:470.0px;top:277.81px;width:62.25px;text-align:right">1,312</div>
<div class="c dt" style="left:532.25px;top:277.81px;width:62.25px;text-align:center;padding:0">8/7/2022</div>
<div class="c dt" style="left:905.75px;top:277.81px;width:62.25px;text-align:center;padding:0">4/1/2023</div>
<div class="c nm" style="left:9.5px;top:292.58px;width:142.0px;text-align:left">2016 John Deere Gator (8744)</div>
<div class="c nb" style="left:151.5px;top:292.58px;width:65.0px;text-align:right">5,208</div>
<div class="c nb" style="left:216.5px;top:292.58px;width:65.0px;text-align:right">1,488</div>
<div class="c nb" style="left:281.5px;top:292.58px;width:64.0px;text-align:center;padding:0">5</div>
<div class="c dt" style="left:345.5px;top:292.58px;width:62.25px;text-align:center;padding:0">10/5/2022</div>
<div class="red" style="left:407.75px;top:290.58px;width:62.25px;height:14.77px"></div>
<div class="c rt nb" style="left:407.75px;top:292.58px;width:62.25px;text-align:right">5,208</div>
<div class="red" style="left:470.0px;top:290.58px;width:62.25px;height:14.77px"></div>
<div class="c rt nb" style="left:470.0px;top:292.58px;width:62.25px;text-align:right">1,488</div>
<div class="red" style="left:532.25px;top:290.58px;width:62.25px;height:14.77px"></div>
<div class="red" style="left:905.75px;top:290.58px;width:62.25px;height:14.77px"></div>
<div class="c rt dt" style="left:905.75px;top:292.58px;width:62.25px;text-align:center;padding:0">4/1/2022</div>
<div class="c nm" style="left:9.5px;top:307.35px;width:142.0px;text-align:left">2017 Kawasaki Mule (4263)</div>
<div class="c nb" style="left:151.5px;top:307.35px;width:65.0px;text-align:right">3,654</div>
<div class="c nb" style="left:216.5px;top:307.35px;width:65.0px;text-align:right">1,044</div>
<div class="c nb" style="left:281.5px;top:307.35px;width:64.0px;text-align:center;padding:0">2</div>
<div class="c dt" style="left:345.5px;top:307.35px;width:62.25px;text-align:center;padding:0">7/18/2022</div>
<div class="c nb" style="left:470.0px;top:307.35px;width:62.25px;text-align:right">1,065</div>
<div class="red" style="left:532.25px;top:305.35px;width:62.25px;height:14.77px"></div>
<div class="c rt dt" style="left:532.25px;top:307.35px;width:62.25px;text-align:center;padding:0">7/3/2022</div>
<div class="c dt" style="left:905.75px;top:307.35px;width:62.25px;text-align:center;padding:0">4/1/2023</div>
<div class="c nm" style="left:9.5px;top:322.12px;width:142.0px;text-align:left">2018 Kawasaki Mule (5521)</div>
<div class="c nb" style="left:151.5px;top:322.12px;width:65.0px;text-align:right">2,864</div>
<div class="c nb" style="left:216.5px;top:322.12px;width:65.0px;text-align:right">819</div>
<div class="c nb" style="left:281.5px;top:322.12px;width:64.0px;text-align:center;padding:0">4</div>
<div class="c dt" style="left:345.5px;top:322.12px;width:62.25px;text-align:center;padding:0">7/18/2022</div>
<div class="red" style="left:470.0px;top:320.12px;width:62.25px;height:14.77px"></div>
<div class="c rt nb" style="left:470.0px;top:322.12px;width:62.25px;text-align:right">822</div>
<div class="c dt" style="left:532.25px;top:322.12px;width:62.25px;text-align:center;padding:0">8/7/2022</div>
<div class="c dt" style="left:905.75px;top:322.12px;width:62.25px;text-align:center;padding:0">4/1/2022</div>
<div class="c nm" style="left:9.5px;top:336.89px;width:142.0px;text-align:left">2019 Chevrolet 2500 (2236)</div>
<div class="c nb" style="left:151.5px;top:336.89px;width:65.0px;text-align:right">118,547</div>
<div class="c nb" style="left:281.5px;top:336.89px;width:64.0px;text-align:center;padding:0">2</div>
<div class="c dt" style="left:345.5px;top:336.89px;width:62.25px;text-align:center;padding:0">8/1/2022</div>
<div class="c nb" style="left:407.75px;top:336.89px;width:62.25px;text-align:right">120,021</div>
<div class="c dt" style="left:532.25px;top:336.89px;width:62.25px;text-align:center;padding:0">1/1/2023</div>
<div class="red" style="left:905.75px;top:334.89px;width:62.25px;height:14.77px"></div>
<div class="c rt dt" style="left:905.75px;top:336.89px;width:62.25px;text-align:center;padding:0">6/5/2022</div>
<div class="c dt" style="left:1092.5px;top:336.89px;width:62.25px;text-align:center;padding:0">7/25/2022</div>
<div class="c nm" style="left:9.5px;top:351.66px;width:142.0px;text-align:left">2019 Chevrolet 2500 (3227)</div>
<div class="c nb" style="left:151.5px;top:351.66px;width:65.0px;text-align:right">93,058</div>
<div class="c nb" style="left:281.5px;top:351.66px;width:64.0px;text-align:center;padding:0">5</div>
<div class="c dt" style="left:345.5px;top:351.66px;width:62.25px;text-align:center;padding:0">7/18/2022</div>
<div class="red" style="left:407.75px;top:349.66px;width:62.25px;height:14.77px"></div>
<div class="c rt nb" style="left:407.75px;top:351.66px;width:62.25px;text-align:right">93,044</div>
<div class="red" style="left:532.25px;top:349.66px;width:62.25px;height:14.77px"></div>
<div class="c dt" style="left:905.75px;top:351.66px;width:62.25px;text-align:center;padding:0">4/1/2023</div>
<div class="red" style="left:1092.5px;top:349.66px;width:62.25px;height:14.77px"></div>
<div class="c rt dt" style="left:1092.5px;top:351.66px;width:62.25px;text-align:center;padding:0">4/23/2022</div>
<div class="c nm" style="left:9.5px;top:366.43px;width:142.0px;text-align:left">2019 Ford F250 (9518)</div>
<div class="c nb" style="left:151.5px;top:366.43px;width:65.0px;text-align:right">129,254</div>
<div class="c nb" style="left:281.5px;top:366.43px;width:64.0px;text-align:center;padding:0">3</div>
<div class="c dt" style="left:345.5px;top:366.43px;width:62.25px;text-align:center;padding:0">9/2/2022</div>
<div class="c dt" style="left:532.25px;top:366.43px;width:62.25px;text-align:center;padding:0">8/7/2022</div>
<div class="red" style="left:905.75px;top:364.43px;width:62.25px;height:14.77px"></div>
<div class="c rt dt" style="left:905.75px;top:366.43px;width:62.25px;text-align:center;padding:0">4/1/2022</div>
<div class="red" style="left:1092.5px;top:364.43px;width:62.25px;height:14.77px"></div>
<div class="c rt dt" style="left:1092.5px;top:366.43px;width:62.25px;text-align:center;padding:0">4/5/2022</div>
<div class="c nm" style="left:9.5px;top:381.20px;width:142.0px;text-align:left">2019 Ford F250 (9978)</div>
<div class="c nb" style="left:151.5px;top:381.20px;width:65.0px;text-align:right">132,054</div>
<div class="c nb" style="left:281.5px;top:381.20px;width:64.0px;text-align:center;padding:0">2</div>
<div class="c dt" style="left:345.5px;top:381.20px;width:62.25px;text-align:center;padding:0">7/18/2022</div>
<div class="c dt" style="left:532.25px;top:381.20px;width:62.25px;text-align:center;padding:0">8/7/2022</div>
<div class="red" style="left:905.75px;top:379.20px;width:62.25px;height:14.77px"></div>
<div class="c rt dt" style="left:905.75px;top:381.20px;width:62.25px;text-align:center;padding:0">6/9/2022</div>
<div class="c dt" style="left:1092.5px;top:381.20px;width:62.25px;text-align:center;padding:0">7/25/2022</div>
<div class="c nm" style="left:9.5px;top:395.97px;width:142.0px;text-align:left">2020 Chevrolet 2500 (5882)</div>
<div class="c nb" style="left:151.5px;top:395.97px;width:65.0px;text-align:right">109,584</div>
<div class="c nb" style="left:281.5px;top:395.97px;width:64.0px;text-align:center;padding:0">5</div>
<div class="c dt" style="left:345.5px;top:395.97px;width:62.25px;text-align:center;padding:0">7/18/2022</div>
<div class="red" style="left:407.75px;top:393.97px;width:62.25px;height:14.77px"></div>
<div class="c rt nb" style="left:407.75px;top:395.97px;width:62.25px;text-align:right">110,002</div>
<div class="c dt" style="left:532.25px;top:395.97px;width:62.25px;text-align:center;padding:0">8/7/2022</div>
<div class="c dt" style="left:905.75px;top:395.97px;width:62.25px;text-align:center;padding:0">5/15/2023</div>
<div class="red" style="left:1092.5px;top:393.97px;width:62.25px;height:14.77px"></div>
<div class="c rt dt" style="left:1092.5px;top:395.97px;width:62.25px;text-align:center;padding:0">6/7/2022</div>
<div class="c nm" style="left:9.5px;top:410.74px;width:142.0px;text-align:left">2020 Chevrolet 2500 (6578)</div>
<div class="c nb" style="left:151.5px;top:410.74px;width:65.0px;text-align:right">101,953</div>
<div class="c nb" style="left:281.5px;top:410.74px;width:64.0px;text-align:center;padding:0">3</div>
<div class="c dt" style="left:345.5px;top:410.74px;width:62.25px;text-align:center;padding:0">7/18/2022</div>
<div class="c nb" style="left:407.75px;top:410.74px;width:62.25px;text-align:right">102,525</div>
<div class="c dt" style="left:532.25px;top:410.74px;width:62.25px;text-align:center;padding:0">1/1/2023</div>
<div class="c dt" style="left:905.75px;top:410.74px;width:62.25px;text-align:center;padding:0">4/13/2023</div>
<div class="red" style="left:1092.5px;top:408.74px;width:62.25px;height:14.77px"></div>
<div class="c rt dt" style="left:1092.5px;top:410.74px;width:62.25px;text-align:center;padding:0">6/7/2022</div>
<div class="c nm" style="left:9.5px;top:425.51px;width:142.0px;text-align:left">2020 Chevrolet 2500 (7747)</div>
<div class="c nb" style="left:151.5px;top:425.51px;width:65.0px;text-align:right">124,574</div>
<div class="c nb" style="left:281.5px;top:425.51px;width:64.0px;text-align:center;padding:0">2</div>
<div class="c dt" style="left:345.5px;top:425.51px;width:62.25px;text-align:center;padding:0">7/18/2022</div>
<div class="c nb" style="left:407.75px;top:425.51px;width:62.25px;text-align:right">125,548</div>
<div class="c dt" style="left:532.25px;top:425.51px;width:62.25px;text-align:center;padding:0">8/7/2022</div>
<div class="red" style="left:905.75px;top:423.51px;width:62.25px;height:14.77px"></div>
<div class="c rt dt" style="left:905.75px;top:425.51px;width:62.25px;text-align:center;padding:0">4/2022</div>
<div class="c dt" style="left:1092.5px;top:425.51px;width:62.25px;text-align:center;padding:0">9/1/2022</div>
<div class="c nm" style="left:9.5px;top:440.28px;width:142.0px;text-align:left">2020 Chevrolet 2500 (8888)</div>
<div class="c nb" style="left:151.5px;top:440.28px;width:65.0px;text-align:right">133,698</div>
<div class="c nb" style="left:281.5px;top:440.28px;width:64.0px;text-align:center;padding:0">2</div>
<div class="c dt" style="left:345.5px;top:440.28px;width:62.25px;text-align:center;padding:0">7/18/2022</div>
<div class="c nb" style="left:407.75px;top:440.28px;width:62.25px;text-align:right">137,523</div>
<div class="c dt" style="left:532.25px;top:440.28px;width:62.25px;text-align:center;padding:0">8/7/2022</div>
<div class="red" style="left:905.75px;top:438.28px;width:62.25px;height:14.77px"></div>
<div class="c rt dt" style="left:905.75px;top:440.28px;width:62.25px;text-align:center;padding:0">5/2022</div>
<div class="c dt" style="left:1092.5px;top:440.28px;width:62.25px;text-align:center;padding:0">9/1/2022</div>
<div class="c nm" style="left:9.5px;top:455.05px;width:142.0px;text-align:left">2021 Ford F150 (1147)</div>
<div class="c nb" style="left:151.5px;top:455.05px;width:65.0px;text-align:right">42,558</div>
<div class="c nb" style="left:281.5px;top:455.05px;width:64.0px;text-align:center;padding:0">4</div>
<div class="red" style="left:345.5px;top:453.05px;width:62.25px;height:14.77px"></div>
<div class="c rt dt" style="left:345.5px;top:455.05px;width:62.25px;text-align:center;padding:0">7/4/2022</div>
<div class="red" style="left:407.75px;top:453.05px;width:62.25px;height:14.77px"></div>
<div class="c rt nb" style="left:407.75px;top:455.05px;width:62.25px;text-align:right">42,600</div>
<div class="c dt" style="left:532.25px;top:455.05px;width:62.25px;text-align:center;padding:0">8/7/2022</div>
<div class="c dt" style="left:905.75px;top:455.05px;width:62.25px;text-align:center;padding:0">4/1/2022</div>
<div class="c dt" style="left:1092.5px;top:455.05px;width:62.25px;text-align:center;padding:0">8/7/2022</div>
<div class="c nm" style="left:9.5px;top:469.82px;width:142.0px;text-align:left">2021 Ford F150 (6359)</div>
<div class="c nb" style="left:151.5px;top:469.82px;width:65.0px;text-align:right">37,451</div>
<div class="c nb" style="left:281.5px;top:469.82px;width:64.0px;text-align:center;padding:0">3</div>
<div class="c dt" style="left:345.5px;top:469.82px;width:62.25px;text-align:center;padding:0">7/18/2022</div>
<div class="c nb" style="left:407.75px;top:469.82px;width:62.25px;text-align:right">56,634</div>
<div class="c dt" style="left:532.25px;top:469.82px;width:62.25px;text-align:center;padding:0">8/7/2022</div>
<div class="red" style="left:905.75px;top:467.82px;width:62.25px;height:14.77px"></div>
<div class="c rt dt" style="left:905.75px;top:469.82px;width:62.25px;text-align:center;padding:0">4/1/2022</div>
<div class="red" style="left:1092.5px;top:467.82px;width:62.25px;height:14.77px"></div>
<div class="c rt dt" style="left:1092.5px;top:469.82px;width:62.25px;text-align:center;padding:0">3/28/2022</div>
<div class="c nm" style="left:9.5px;top:484.59px;width:142.0px;text-align:left">2021 Ford F150 (8111)</div>
<div class="c nb" style="left:151.5px;top:484.59px;width:65.0px;text-align:right">38,278</div>
<div class="c nb" style="left:281.5px;top:484.59px;width:64.0px;text-align:center;padding:0">3</div>
<div class="c dt" style="left:345.5px;top:484.59px;width:62.25px;text-align:center;padding:0">7/18/2022</div>
<div class="c nb" style="left:407.75px;top:484.59px;width:62.25px;text-align:right">41,154</div>
<div class="red" style="left:532.25px;top:482.59px;width:62.25px;height:14.77px"></div>
<div class="red" style="left:905.75px;top:482.59px;width:62.25px;height:14.77px"></div>
<div class="c rt dt" style="left:905.75px;top:484.59px;width:62.25px;text-align:center;padding:0">4/2022</div>
<div class="c dt" style="left:1092.5px;top:484.59px;width:62.25px;text-align:center;padding:0">8/7/2022</div>
<div class="c nm" style="left:9.5px;top:499.36px;width:142.0px;text-align:left">2021 Ford F150 (8974)</div>
<div class="c nb" style="left:151.5px;top:499.36px;width:65.0px;text-align:right">54,239</div>
<div class="c nb" style="left:281.5px;top:499.36px;width:64.0px;text-align:center;padding:0">3</div>
<div class="red" style="left:345.5px;top:497.36px;width:62.25px;height:14.77px"></div>
<div class="c rt dt" style="left:345.5px;top:499.36px;width:62.25px;text-align:center;padding:0">7/8/2022</div>
<div class="c nb" style="left:407.75px;top:499.36px;width:62.25px;text-align:right">56,634</div>
<div class="c dt" style="left:532.25px;top:499.36px;width:62.25px;text-align:center;padding:0">8/7/2022</div>
<div class="c dt" style="left:905.75px;top:499.36px;width:62.25px;text-align:center;padding:0">4/1/2022</div>
<div class="red" style="left:1092.5px;top:497.36px;width:62.25px;height:14.77px"></div>
<div class="c rt dt" style="left:1092.5px;top:499.36px;width:62.25px;text-align:center;padding:0">6/23/2022</div>
<div class="c nm" style="left:9.5px;top:514.13px;width:142.0px;text-align:left">2022 Ford F250 (2213)</div>
<div class="c nb" style="left:151.5px;top:514.13px;width:65.0px;text-align:right">19,245</div>
<div class="c nb" style="left:281.5px;top:514.13px;width:64.0px;text-align:center;padding:0">1</div>
<div class="c dt" style="left:345.5px;top:514.13px;width:62.25px;text-align:center;padding:0">7/18/2022</div>
<div class="c nb" style="left:407.75px;top:514.13px;width:62.25px;text-align:right">19,925</div>
<div class="c dt" style="left:532.25px;top:514.13px;width:62.25px;text-align:center;padding:0">8/7/2022</div>
<div class="c dt" style="left:905.75px;top:514.13px;width:62.25px;text-align:center;padding:0">5/15/2023</div>
<div class="c dt" style="left:1092.5px;top:514.13px;width:62.25px;text-align:center;padding:0">9/23/2022</div>
<div class="c nm" style="left:9.5px;top:528.90px;width:142.0px;text-align:left">2022 Ford F250 (4033)</div>
<div class="c nb" style="left:151.5px;top:528.90px;width:65.0px;text-align:right">12,225</div>
<div class="c nb" style="left:281.5px;top:528.90px;width:64.0px;text-align:center;padding:0">2</div>
<div class="c dt" style="left:345.5px;top:528.90px;width:62.25px;text-align:center;padding:0">7/18/2022</div>
<div class="c nb" style="left:407.75px;top:528.90px;width:62.25px;text-align:right">12,788</div>
<div class="c dt" style="left:532.25px;top:528.90px;width:62.25px;text-align:center;padding:0">8/7/2022</div>
<div class="c nb" style="left:594.5px;top:528.90px;width:62.25px;text-align:right">12,788</div>
<div class="c dt" style="left:719.0px;top:528.90px;width:62.25px;text-align:center;padding:0">8/7/2022</div>
<div class="c nb" style="left:781.25px;top:528.90px;width:62.25px;text-align:right">12,788</div>
<div class="c dt" style="left:905.75px;top:528.90px;width:62.25px;text-align:center;padding:0">4/15/2023</div>
<div class="red" style="left:1092.5px;top:526.90px;width:62.25px;height:14.77px"></div>
<div class="c rt dt" style="left:1092.5px;top:528.90px;width:62.25px;text-align:center;padding:0">3/28/2022</div>
<div class="c nm" style="left:9.5px;top:543.67px;width:142.0px;text-align:left">Big Tex Trailer 20Ft (3654)</div>
<div class="c nb" style="left:281.5px;top:543.67px;width:64.0px;text-align:center;padding:0">1</div>
<div class="c dt" style="left:719.0px;top:543.67px;width:62.25px;text-align:center;padding:0">8/7/2022</div>
<div class="red" style="left:905.75px;top:541.67px;width:62.25px;height:14.77px"></div>
<div class="c rt dt" style="left:905.75px;top:543.67px;width:62.25px;text-align:center;padding:0">4/3/2022</div>
<div class="c nm" style="left:9.5px;top:558.44px;width:142.0px;text-align:left">Big Tex Trailer 20Ft (8884)</div>
<div class="c nb" style="left:281.5px;top:558.44px;width:64.0px;text-align:center;padding:0">1</div>
<div class="c dt" style="left:719.0px;top:558.44px;width:62.25px;text-align:center;padding:0">8/7/2022</div>
<div class="red" style="left:905.75px;top:556.44px;width:62.25px;height:14.77px"></div>
<div class="c rt dt" style="left:905.75px;top:558.44px;width:62.25px;text-align:center;padding:0">5/15/2022</div>
<div class="c nm" style="left:9.5px;top:573.21px;width:142.0px;text-align:left">Bomag BW213 Roller (0263)</div>
<div class="c nb" style="left:216.5px;top:573.21px;width:65.0px;text-align:right">5,322</div>
<div class="c nb" style="left:281.5px;top:573.21px;width:64.0px;text-align:center;padding:0">0</div>
<div class="c dt" style="left:345.5px;top:573.21px;width:62.25px;text-align:center;padding:0">7/18/2022</div>
<div class="c nb" style="left:407.75px;top:573.21px;width:62.25px;text-align:right">5,825</div>
<div class="c dt" style="left:532.25px;top:573.21px;width:62.25px;text-align:center;padding:0">7/18/2022</div>
<div class="c nb" style="left:594.5px;top:573.21px;width:62.25px;text-align:right">5,825</div>
<div class="c nm" style="left:9.5px;top:587.98px;width:142.0px;text-align:left">Bomag BW213 Roller (6563)</div>
<div class="c nb" style="left:216.5px;top:587.98px;width:65.0px;text-align:right">4,428</div>
<div class="c nb" style="left:281.5px;top:587.98px;width:64.0px;text-align:center;padding:0">0</div>
<div class="c dt" style="left:345.5px;top:587.98px;width:62.25px;text-align:center;padding:0">7/18/2022</div>
<div class="c nb" style="left:407.75px;top:587.98px;width:62.25px;text-align:right">4,762</div>
<div class="c dt" style="left:532.25px;top:587.98px;width:62.25px;text-align:center;padding:0">7/18/2022</div>
<div class="c nb" style="left:594.5px;top:587.98px;width:62.25px;text-align:right">4,762</div>
<div class="c nm" style="left:9.5px;top:602.75px;width:142.0px;text-align:left">Bourg Trailer 25Ft (1187)</div>
<div class="c nb" style="left:281.5px;top:602.75px;width:64.0px;text-align:center;padding:0">1</div>
<div class="red" style="left:719.0px;top:600.75px;width:62.25px;height:14.77px"></div>
<div class="c rt dt" style="left:719.0px;top:602.75px;width:62.25px;text-align:center;padding:0">3/28/2022</div>
<div class="c nm" style="left:9.5px;top:617.52px;width:142.0px;text-align:left">Bourg Trailer 25Ft (1785)</div>
<div class="c nb" style="left:281.5px;top:617.52px;width:64.0px;text-align:center;padding:0">1</div>
<div class="red" style="left:719.0px;top:615.52px;width:62.25px;height:14.77px"></div>
<div class="c rt dt" style="left:719.0px;top:617.52px;width:62.25px;text-align:center;padding:0">9/12/2022</div>
<div class="c nm" style="left:9.5px;top:632.29px;width:142.0px;text-align:left">Broce Broom (9670)</div>
<div class="c nb" style="left:216.5px;top:632.29px;width:65.0px;text-align:right">2,457</div>
<div class="c nb" style="left:281.5px;top:632.29px;width:64.0px;text-align:center;padding:0">3</div>
<div class="red" style="left:345.5px;top:630.29px;width:62.25px;height:14.77px"></div>
<div class="c rt dt" style="left:345.5px;top:632.29px;width:62.25px;text-align:center;padding:0">4/2/2022</div>
<div class="c nb" style="left:470.0px;top:632.29px;width:62.25px;text-align:right">2,490</div>
<div class="red" style="left:532.25px;top:630.29px;width:62.25px;height:14.77px"></div>
<div class="c rt dt" style="left:532.25px;top:632.29px;width:62.25px;text-align:center;padding:0">4/2/2022</div>
<div class="c nb" style="left:656.75px;top:632.29px;width:62.25px;text-align:right">2,490</div>
<div class="c nm" style="left:9.5px;top:647.06px;width:142.0px;text-align:left">Cat D5 G LGP Dozer (1158)</div>
<div class="c nb" style="left:216.5px;top:647.06px;width:65.0px;text-align:right">6,327</div>
<div class="c nb" style="left:281.5px;top:647.06px;width:64.0px;text-align:center;padding:0">3</div>
<div class="red" style="left:345.5px;top:645.06px;width:62.25px;height:14.77px"></div>
<div class="c rt dt" style="left:345.5px;top:647.06px;width:62.25px;text-align:center;padding:0">4/2/2022</div>
<div class="red" style="left:470.0px;top:645.06px;width:62.25px;height:14.77px"></div>
<div class="c rt nb" style="left:470.0px;top:647.06px;width:62.25px;text-align:right">6,320</div>
<div class="red" style="left:532.25px;top:645.06px;width:62.25px;height:14.77px"></div>
<div class="c rt dt" style="left:532.25px;top:647.06px;width:62.25px;text-align:center;padding:0">4/2/2022</div>
<div class="red" style="left:656.75px;top:645.06px;width:62.25px;height:14.77px"></div>
<div class="c rt nb" style="left:656.75px;top:647.06px;width:62.25px;text-align:right">6,320</div>
<div class="c nm" style="left:9.5px;top:661.83px;width:142.0px;text-align:left">Cat D5 G LGP Dozer (1196)</div>
<div class="c nb" style="left:216.5px;top:661.83px;width:65.0px;text-align:right">5,432</div>
<div class="c nb" style="left:281.5px;top:661.83px;width:64.0px;text-align:center;padding:0">3</div>
<div class="red" style="left:345.5px;top:659.83px;width:62.25px;height:14.77px"></div>
<div class="c rt dt" style="left:345.5px;top:661.83px;width:62.25px;text-align:center;padding:0">4/28/2022</div>
<div class="c nb" style="left:470.0px;top:661.83px;width:62.25px;text-align:right">5,538</div>
<div class="red" style="left:532.25px;top:659.83px;width:62.25px;height:14.77px"></div>
<div class="c rt dt" style="left:532.25px;top:661.83px;width:62.25px;text-align:center;padding:0">4/28/2022</div>
<div class="c nb" style="left:656.75px;top:661.83px;width:62.25px;text-align:right">5,538</div>
<div class="c nm" style="left:9.5px;top:676.60px;width:142.0px;text-align:left">Kom D41P-6 Dozer (0097)</div>
<div class="c nb" style="left:216.5px;top:676.60px;width:65.0px;text-align:right">4,657</div>
<div class="c nb" style="left:281.5px;top:676.60px;width:64.0px;text-align:center;padding:0">3</div>
<div class="red" style="left:345.5px;top:674.60px;width:62.25px;height:14.77px"></div>
<div class="c rt dt" style="left:345.5px;top:676.60px;width:62.25px;text-align:center;padding:0">4/30/2022</div>
<div class="c nb" style="left:470.0px;top:676.60px;width:62.25px;text-align:right">4,752</div>
<div class="red" style="left:532.25px;top:674.60px;width:62.25px;height:14.77px"></div>
<div class="c rt dt" style="left:532.25px;top:676.60px;width:62.25px;text-align:center;padding:0">4/30/2022</div>
<div class="c nb" style="left:656.75px;top:676.60px;width:62.25px;text-align:right">4,752</div>
<div class="c nm" style="left:9.5px;top:691.37px;width:142.0px;text-align:left">Kom D41P-6 Dozer (0225)</div>
<div class="c nb" style="left:216.5px;top:691.37px;width:65.0px;text-align:right">1,132</div>
<div class="c nb" style="left:281.5px;top:691.37px;width:64.0px;text-align:center;padding:0">3</div>
<div class="red" style="left:345.5px;top:689.37px;width:62.25px;height:14.77px"></div>
<div class="c rt dt" style="left:345.5px;top:691.37px;width:62.25px;text-align:center;padding:0">4/15/2022</div>
<div class="c nb" style="left:470.0px;top:691.37px;width:62.25px;text-align:right">1,200</div>
<div class="red" style="left:532.25px;top:689.37px;width:62.25px;height:14.77px"></div>
<div class="c rt dt" style="left:532.25px;top:691.37px;width:62.25px;text-align:center;padding:0">4/15/2022</div>
<div class="c nb" style="left:656.75px;top:691.37px;width:62.25px;text-align:right">1,200</div>
<div class="c nm" style="left:9.5px;top:706.14px;width:142.0px;text-align:left">Kom D41P-6 Dozer (5847)</div>
<div class="c nb" style="left:216.5px;top:706.14px;width:65.0px;text-align:right">7,843</div>
<div class="c nb" style="left:281.5px;top:706.14px;width:64.0px;text-align:center;padding:0">3</div>
<div class="red" style="left:345.5px;top:704.14px;width:62.25px;height:14.77px"></div>
<div class="c rt dt" style="left:345.5px;top:706.14px;width:62.25px;text-align:center;padding:0">3/26/2022</div>
<div class="red" style="left:470.0px;top:704.14px;width:62.25px;height:14.77px"></div>
<div class="c rt nb" style="left:470.0px;top:706.14px;width:62.25px;text-align:right">7,885</div>
<div class="red" style="left:532.25px;top:704.14px;width:62.25px;height:14.77px"></div>
<div class="c rt dt" style="left:532.25px;top:706.14px;width:62.25px;text-align:center;padding:0">3/26/2022</div>
<div class="red" style="left:656.75px;top:704.14px;width:62.25px;height:14.77px"></div>
<div class="c rt nb" style="left:656.75px;top:706.14px;width:62.25px;text-align:right">7,885</div>
<div class="red" style="left:345.5px;top:718.91px;width:62.25px;height:3.59px"></div>
<div class="red" style="left:532.25px;top:718.91px;width:62.25px;height:3.59px"></div>
<div class="h" style="left:11.7px;top:217.5px;text-align:left"><span style="display:inline-block;transform:scaleX(0.96);transform-origin:0 0">VEHICLE/EQUIPMENT</span></div>
<div class="h" style="left:151.5px;top:203.5px;width:65.0px"><span style="display:inline-block;transform:scaleX(0.94)">CURRENT</span></div>
<div class="h" style="left:151.5px;top:217.5px;width:65.0px"><span style="display:inline-block;transform:scaleX(0.94)">MILEAGE</span></div>
<div class="h" style="left:216.5px;top:203.5px;width:65.0px"><span style="display:inline-block;transform:scaleX(0.94)">CURRENT</span></div>
<div class="h" style="left:216.5px;top:217.5px;width:65.0px"><span style="display:inline-block;transform:scaleX(0.94)">HOURS</span></div>
<div class="h" style="left:281.5px;top:203.5px;width:64.0px"><span style="display:inline-block;transform:scaleX(0.94)">NEEDS</span></div>
<div class="h" style="left:281.5px;top:217.5px;width:64.0px"><span style="display:inline-block;transform:scaleX(0.94)">ATTENTION</span></div>
<div class="h" style="left:345.5px;top:203.5px;width:186.75px"><span style="display:inline-block;transform:scaleX(0.88)">OIL CHANCE</span></div>
<div class="h" style="left:345.5px;top:217.5px;width:62.25px"><span style="display:inline-block;transform:scaleX(0.94)">DATE</span></div>
<div class="h" style="left:407.75px;top:217.5px;width:62.25px"><span style="display:inline-block;transform:scaleX(0.94)">MILEAGE</span></div>
<div class="h" style="left:470.0px;top:217.5px;width:62.25px"><span style="display:inline-block;transform:scaleX(0.94)">HOURS</span></div>
<div class="h" style="left:532.25px;top:203.5px;width:186.75px"><span style="display:inline-block;transform:scaleX(0.88)">CHECK FLUIDS</span></div>
<div class="h" style="left:532.25px;top:217.5px;width:62.25px"><span style="display:inline-block;transform:scaleX(0.94)">DATE</span></div>
<div class="h" style="left:594.5px;top:217.5px;width:62.25px"><span style="display:inline-block;transform:scaleX(0.94)">MILEAGE</span></div>
<div class="h" style="left:656.75px;top:217.5px;width:62.25px"><span style="display:inline-block;transform:scaleX(0.94)">HOURS</span></div>
<div class="h" style="left:719.0px;top:203.5px;width:186.75px"><span style="display:inline-block;transform:scaleX(0.88)">INSPECTION</span></div>
<div class="h" style="left:719.0px;top:217.5px;width:62.25px"><span style="display:inline-block;transform:scaleX(0.94)">DATE</span></div>
<div class="h" style="left:781.25px;top:217.5px;width:62.25px"><span style="display:inline-block;transform:scaleX(0.94)">MILEAGE</span></div>
<div class="h" style="left:843.5px;top:217.5px;width:62.25px"><span style="display:inline-block;transform:scaleX(0.94)">HOURS</span></div>
<div class="h" style="left:905.75px;top:203.5px;width:186.75px"><span style="display:inline-block;transform:scaleX(0.88)">REPLACE TIRES</span></div>
<div class="h" style="left:905.75px;top:217.5px;width:62.25px"><span style="display:inline-block;transform:scaleX(0.94)">DATE</span></div>
<div class="h" style="left:968.0px;top:217.5px;width:62.25px"><span style="display:inline-block;transform:scaleX(0.94)">MILEAGE</span></div>
<div class="h" style="left:1030.25px;top:217.5px;width:62.25px"><span style="display:inline-block;transform:scaleX(0.94)">HOURS</span></div>
<div class="h" style="left:1092.5px;top:203.5px;width:186.75px"><span style="display:inline-block;transform:scaleX(0.88)">REPLACE WIPERS</span></div>
<div class="h" style="left:1092.5px;top:217.5px;width:62.25px"><span style="display:inline-block;transform:scaleX(0.94)">DATE</span></div>
<div class="h" style="left:1154.75px;top:217.5px;width:62.25px"><span style="display:inline-block;transform:scaleX(0.94)">MILEAGE</span></div>
<div class="h" style="left:1217.0px;top:217.5px;width:62.25px"><span style="display:inline-block;transform:scaleX(0.94)">HOURS</span></div>

<!-- buttons -->
<div class="btn" style="left:12px;top:133px;width:114px;height:20.5px;font-size:12px;line-height:22px">Setup</div>
<div class="btn" style="left:11px;top:158.5px;width:114px;height:20px;font-size:12px;line-height:21px">Instructions</div>
<div class="btn" style="left:256.5px;top:132.5px;width:86px;height:20.5px;font-size:10px;font-weight:normal;line-height:20.5px;-webkit-text-stroke:0.3px #fff">Add Line</div>
<div class="btn" style="left:256.5px;top:159.5px;width:86px;height:19.5px;font-size:10px;font-weight:normal;line-height:20.5px;-webkit-text-stroke:0.3px #fff">Delete Line</div>
<svg style="position:absolute;left:58px;top:181px" width="34" height="20"><path d="M1.5 1.5 L17.5 1.5 L9.5 18 Z" fill="#b4c2dc" stroke="#7e8fb0" stroke-width="1"/><path d="M14 18.5 L23.5 1.5 L32.5 18.5 Z" fill="#b4c2dc" stroke="#7e8fb0" stroke-width="1"/></svg>
<svg style="position:absolute;left:298px;top:181px" width="34" height="20"><path d="M1 1.5 L17.5 1.5 L9.5 18 Z" fill="#b4c2dc" stroke="#7e8fb0" stroke-width="1"/><path d="M13.5 18.5 L23 1.5 L32 18.5 Z" fill="#b4c2dc" stroke="#7e8fb0" stroke-width="1"/></svg>

<div style="left:534px;top:144px;font-size:25px;font-weight:bold;color:#1f3864;white-space:nowrap;transform:scaleX(0.902);transform-origin:0 0">FLEET MAINTENANCE REMINDER</div>

<div style="left:531.5px;top:305.5px;width:62.5px;height:15.5px;border:1.5px solid #1e6b48"></div>
<!-- frozen pane lines -->
<div style="left:345px;top:130px;width:1px;height:593px;background:#bdbdbd"></div>
<div style="left:0;top:231px;width:1280px;height:1px;background:#bdbdbd"></div>

<!-- bottom -->
<div style="left:0;top:722.5px;width:1280px;height:40px;background:#efefef"></div>
<div style="left:0;top:722.5px;width:1280px;height:1px;background:#dadada"></div>
<div style="left:5px;top:730px;width:1194px;height:6.5px;background:#6e6e6e;border-radius:3px"></div>
<div style="left:0;top:742px;width:1280px;height:20px;background:#f3f3f3"></div>
<div class="rb" style="left:-2px;top:748px;font-size:9px;color:#444">Ready</div>
<div class="rb" style="left:75px;top:748px;font-size:8.8px;color:#444">Accessibility: Investigate</div>
<svg style="position:absolute;left:36px;top:747px" width="13" height="12"><path d="M0.5 1.5h11v8.5h-11z M0.5 3.5h11" fill="none" stroke="#555" stroke-width="1"/><circle cx="7.5" cy="7" r="3" fill="#fff" stroke="#555" stroke-width="1"/><circle cx="7.5" cy="7" r="1.2" fill="#444"/></svg>
<svg style="position:absolute;left:61px;top:746px" width="12" height="13"><circle cx="5" cy="2.2" r="1.6" fill="none" stroke="#555" stroke-width="0.9"/><path d="M1 5h8 M5 4v4 l-2.5 4.5 M5 8l1.5 2.5" fill="none" stroke="#555" stroke-width="0.9"/><path d="M7 8.5l4 4 M11 8.5l-4 4" stroke="#555" stroke-width="0.9"/></svg>
<div style="left:1248px;top:744px;width:28px;height:17px;background:#e9e9e9"></div>
<svg style="position:absolute;left:1260.5px;top:747px" width="12" height="11"><rect x="0" y="0" width="11.5" height="10.5" rx="1" fill="#3c3c3c"/><g fill="#fff"><circle cx="2.6" cy="2.5" r="0.9"/><circle cx="5.75" cy="2.5" r="0.9"/><circle cx="8.9" cy="2.5" r="0.9"/><circle cx="2.6" cy="5.25" r="0.9"/><circle cx="5.75" cy="5.25" r="0.9"/><circle cx="8.9" cy="5.25" r="0.9"/><circle cx="2.6" cy="8" r="0.9"/><circle cx="5.75" cy="8" r="0.9"/><circle cx="8.9" cy="8" r="0.9"/></g></svg>
<div style="left:1278px;top:0;width:2px;height:762px;background:#1e1e1e"></div>
<div style="left:0;top:760.5px;width:1280px;height:1.5px;background:#555"></div>

<!-- dialog -->
<div style="left:547px;top:186.5px;width:384px;height:341px;border-radius:5px;box-shadow:0 9px 20px 2px rgba(0,0,0,0.25), 0 0 0 1px rgba(0,0,0,0.1);background:#f0f0f0;overflow:hidden">
</div>
<div style="left:547px;top:186.5px;width:384px;height:22.5px;border-radius:5px 5px 0 0;background:#fff"></div>
<div class="dlg" style="left:553px;top:192px;font-size:9.4px;color:#111">Days/Miles/Hours</div>
<svg style="position:absolute;left:914px;top:192px" width="11" height="11"><path d="M1 1l9 9 M10 1l-9 9" stroke="#222" stroke-width="1"/></svg>

<div class="dlg" style="left:678px;top:217px;font-size:17px;font-weight:bold;color:#000;letter-spacing:-0.4px">CHECK FLUIDS</div>
<div class="dlg" style="left:651.5px;top:240.5px;font-size:13.7px;font-weight:bold;color:#62401f">2017 Kawasaki Mule (4263)</div>

<div class="dlg" style="left:570.5px;top:272px;font-size:9.2px;font-weight:bold;color:#111">Next Date Due</div>
<div class="dlg" style="left:705.5px;top:272px;font-size:9.2px;font-weight:bold;color:#111">Miles To Add</div>
<div class="dlg" style="left:834.5px;top:272px;font-size:9.2px;font-weight:bold;color:#111">Hours To Add</div>

<!-- frames -->
<div style="left:553px;top:296px;width:117px;height:111.5px;border:1px solid #c8c8c8;box-shadow:inset 1px 1px 0 #fff, 1px 1px 0 #fff"></div>
<div style="left:677px;top:296px;width:117px;height:111.5px;border:1px solid #c8c8c8;box-shadow:inset 1px 1px 0 #fff, 1px 1px 0 #fff"></div>
<div style="left:808px;top:296px;width:111px;height:111.5px;border:1px solid #c8c8c8;box-shadow:inset 1px 1px 0 #fff, 1px 1px 0 #fff"></div>
<div class="dlg" style="left:561px;top:290.5px;padding:0 2px;background:#f0f0f0;font-size:8.3px">Days to Add to Today</div>
<div class="dlg" style="left:685.5px;top:290.5px;padding:0 2px;background:#f0f0f0;font-size:8.3px">Add to Current Mileage</div>
<div class="dlg" style="left:816px;top:290.5px;padding:0 2px;background:#f0f0f0;font-size:8.3px">Add to Current Hours</div>
<svg style="position:absolute;left:560.5px;top:305.7px" width="12" height="12"><path d="M2.6 9.0 A4.5 4.5 0 0 1 9.4 3.0" fill="none" stroke="#7a7a7a" stroke-width="1.1"/></svg>
<div class="dlg" style="left:574.5px;top:307.1px;font-size:8.3px;color:#111">30 Days</div>
<svg style="position:absolute;left:560.5px;top:324.4px" width="12" height="12"><path d="M2.6 9.0 A4.5 4.5 0 0 1 9.4 3.0" fill="none" stroke="#7a7a7a" stroke-width="1.1"/><circle cx="6" cy="6" r="1.8" fill="#000"/></svg>
<div class="dlg" style="left:574.5px;top:325.8px;font-size:8.3px;color:#111">60 Days</div>
<svg style="position:absolute;left:560.5px;top:343.09999999999997px" width="12" height="12"><path d="M2.6 9.0 A4.5 4.5 0 0 1 9.4 3.0" fill="none" stroke="#7a7a7a" stroke-width="1.1"/></svg>
<div class="dlg" style="left:574.5px;top:344.5px;font-size:8.3px;color:#111">90 Days</div>
<svg style="position:absolute;left:560.5px;top:361.8px" width="12" height="12"><path d="M2.6 9.0 A4.5 4.5 0 0 1 9.4 3.0" fill="none" stroke="#7a7a7a" stroke-width="1.1"/></svg>
<div class="dlg" style="left:574.5px;top:363.20000000000005px;font-size:8.3px;color:#111">180 Days</div>
<svg style="position:absolute;left:560.5px;top:380.5px" width="12" height="12"><path d="M2.6 9.0 A4.5 4.5 0 0 1 9.4 3.0" fill="none" stroke="#7a7a7a" stroke-width="1.1"/></svg>
<div class="dlg" style="left:574.5px;top:381.90000000000003px;font-size:8.3px;color:#111">365 Days</div>
<svg style="position:absolute;left:685.5px;top:305.7px" width="12" height="12"><path d="M2.6 9.0 A4.5 4.5 0 0 1 9.4 3.0" fill="none" stroke="#7a7a7a" stroke-width="1.1"/></svg>
<div class="dlg" style="left:699.5px;top:307.1px;font-size:8.3px;color:#111">500 Miles</div>
<svg style="position:absolute;left:685.5px;top:324.4px" width="12" height="12"><path d="M2.6 9.0 A4.5 4.5 0 0 1 9.4 3.0" fill="none" stroke="#7a7a7a" stroke-width="1.1"/></svg>
<div class="dlg" style="left:699.5px;top:325.8px;font-size:8.3px;color:#111">1000 Miles</div>
<svg style="position:absolute;left:685.5px;top:343.09999999999997px" width="12" height="12"><path d="M2.6 9.0 A4.5 4.5 0 0 1 9.4 3.0" fill="none" stroke="#7a7a7a" stroke-width="1.1"/></svg>
<div class="dlg" style="left:699.5px;top:344.5px;font-size:8.3px;color:#111">2500 Miles</div>
<svg style="position:absolute;left:685.5px;top:361.8px" width="12" height="12"><path d="M2.6 9.0 A4.5 4.5 0 0 1 9.4 3.0" fill="none" stroke="#7a7a7a" stroke-width="1.1"/></svg>
<div class="dlg" style="left:699.5px;top:363.20000000000005px;font-size:8.3px;color:#111">5000 Miles</div>
<svg style="position:absolute;left:685.5px;top:380.5px" width="12" height="12"><path d="M2.6 9.0 A4.5 4.5 0 0 1 9.4 3.0" fill="none" stroke="#7a7a7a" stroke-width="1.1"/></svg>
<div class="dlg" style="left:699.5px;top:381.90000000000003px;font-size:8.3px;color:#111">10000 Miles</div>
<svg style="position:absolute;left:815.5px;top:305.7px" width="12" height="12"><path d="M2.6 9.0 A4.5 4.5 0 0 1 9.4 3.0" fill="none" stroke="#7a7a7a" stroke-width="1.1"/></svg>
<div class="dlg" style="left:829.5px;top:307.1px;font-size:8.3px;color:#111">50 Hours</div>
<svg style="position:absolute;left:815.5px;top:324.4px" width="12" height="12"><path d="M2.6 9.0 A4.5 4.5 0 0 1 9.4 3.0" fill="none" stroke="#7a7a7a" stroke-width="1.1"/></svg>
<div class="dlg" style="left:829.5px;top:325.8px;font-size:8.3px;color:#111">100 Hours</div>
<svg style="position:absolute;left:815.5px;top:343.09999999999997px" width="12" height="12"><path d="M2.6 9.0 A4.5 4.5 0 0 1 9.4 3.0" fill="none" stroke="#7a7a7a" stroke-width="1.1"/></svg>
<div class="dlg" style="left:829.5px;top:344.5px;font-size:8.3px;color:#111">250 Hours</div>
<svg style="position:absolute;left:815.5px;top:361.8px" width="12" height="12"><path d="M2.6 9.0 A4.5 4.5 0 0 1 9.4 3.0" fill="none" stroke="#7a7a7a" stroke-width="1.1"/></svg>
<div class="dlg" style="left:829.5px;top:363.20000000000005px;font-size:8.3px;color:#111">500 Hours</div>
<svg style="position:absolute;left:815.5px;top:380.5px" width="12" height="12"><path d="M2.6 9.0 A4.5 4.5 0 0 1 9.4 3.0" fill="none" stroke="#7a7a7a" stroke-width="1.1"/></svg>
<div class="dlg" style="left:829.5px;top:381.90000000000003px;font-size:8.3px;color:#111">750 Hours</div>
<div style="left:573.5px;top:324.5px;width:33.5px;height:12.5px;border:1px dotted #333"></div>

<!-- text boxes -->
<div style="left:559.5px;top:415px;width:92.5px;height:20px;background:#fff;border-top:1.5px solid #8a8a8a;border-left:1.5px solid #8a8a8a;border-bottom:1px solid #f8f8f8;border-right:1px solid #f8f8f8"></div>
<div class="dlg" style="left:559.5px;top:418px;width:92.5px;text-align:center;font-size:9.6px;font-weight:bold;letter-spacing:0.35px;color:#111">9/5/2022</div>
<div style="left:684px;top:415px;width:92px;height:20px;background:#fff;border-top:1.5px solid #8a8a8a;border-left:1.5px solid #8a8a8a;border-bottom:1px solid #f8f8f8;border-right:1px solid #f8f8f8"></div>
<div class="dlg" style="left:684px;top:418px;width:92px;text-align:center;font-size:9.6px;font-weight:bold;letter-spacing:0.35px;color:#111">3654</div>
<div style="left:814.5px;top:415px;width:91.5px;height:20px;background:#fff;border-top:1.5px solid #8a8a8a;border-left:1.5px solid #8a8a8a;border-bottom:1px solid #f8f8f8;border-right:1px solid #f8f8f8"></div>
<div class="dlg" style="left:814.5px;top:418px;width:91.5px;text-align:center;font-size:9.6px;font-weight:bold;letter-spacing:0.35px;color:#111">1044</div>
<!-- X buttons -->
<div style="left:652px;top:415px;width:19px;height:20px;background:#f0f0f0;border-top:1px solid #fff;border-left:1px solid #fff;border-bottom:1.5px solid #8a8a8a;border-right:1.5px solid #8a8a8a"></div>
<div class="dlg" style="left:652px;top:416px;width:19px;text-align:center;font-size:13px;font-weight:bold;color:#e00000">x</div>
<div style="left:776.5px;top:415px;width:19.5px;height:20px;background:#f0f0f0;border-top:1px solid #fff;border-left:1px solid #fff;border-bottom:1.5px solid #8a8a8a;border-right:1.5px solid #8a8a8a"></div>
<div class="dlg" style="left:776.5px;top:416px;width:19.5px;text-align:center;font-size:13px;font-weight:bold;color:#e00000">x</div>
<div style="left:906.5px;top:415px;width:19.5px;height:20px;background:#f0f0f0;border-top:1px solid #fff;border-left:1px solid #fff;border-bottom:1.5px solid #8a8a8a;border-right:1.5px solid #8a8a8a"></div>
<div class="dlg" style="left:906.5px;top:416px;width:19.5px;text-align:center;font-size:13px;font-weight:bold;color:#e00000">x</div>

<div class="dlg" style="left:554px;top:440px;width:102px;text-align:center;font-size:8.3px;line-height:10.3px;color:#222">Manual date can also be<br>entered above</div>
<div class="dlg" style="left:679px;top:440px;width:102px;text-align:center;font-size:8.3px;line-height:10.3px;color:#222">Manual miles can also be<br>entered above</div>
<div class="dlg" style="left:814px;top:440px;width:102px;text-align:center;font-size:8.3px;line-height:10.3px;color:#222">Manual hours can also<br>be entered above</div>

<!-- OK / CANCEL -->
<div style="left:633.5px;top:489.5px;width:62px;height:30.5px;background:#f0f0f0;border-top:1px solid transparent;border-left:1px solid transparent;border-bottom:2px solid #6a6a6a;border-right:2px solid #6a6a6a"></div>
<div class="dlg" style="left:633.5px;top:500px;width:62px;text-align:center;font-size:8px;color:#111">OK</div>
<div style="left:769.5px;top:489.5px;width:62.5px;height:30.5px;background:#f0f0f0;border-top:1px solid transparent;border-left:1px solid transparent;border-bottom:2px solid #6a6a6a;border-right:2px solid #6a6a6a"></div>
<div class="dlg" style="left:769.5px;top:500px;width:62.5px;text-align:center;font-size:8px;color:#111">CANCEL</div>

<!-- cursor highlight -->
<div style="left:680px;top:319px;width:50px;height:48px;border-radius:50%;background:radial-gradient(closest-side, rgba(240,240,80,0.62) 78%, rgba(240,240,80,0) 100%)"></div>
<svg style="position:absolute;left:699px;top:337px" width="12" height="18"><path d="M1 1 L1 14 L4 11 L6.5 16.5 L8.5 15.5 L6 10.5 L10 10.5 Z" fill="#fff" stroke="#222" stroke-width="0.9"/></svg>
<div style="left:590px;top:318.5px;width:11.5px;height:11.5px;border-radius:50%;border:1.5px solid rgba(120,120,120,0.55)"></div>

</div></body></html>
